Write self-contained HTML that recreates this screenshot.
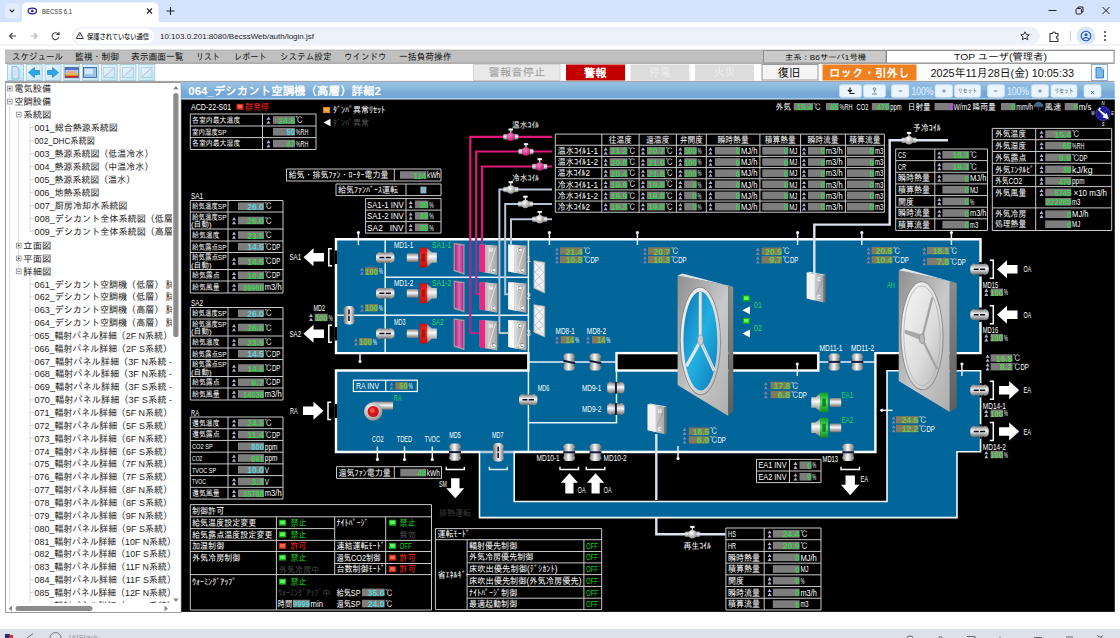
<!DOCTYPE html>
<html lang="ja"><head><meta charset="utf-8"><title>BECSS 6.1</title>
<style>

*{box-sizing:border-box;margin:0;padding:0}
html,body{width:1120px;height:638px;overflow:hidden;background:#fff}
body{font-family:"Liberation Sans","IPAGothic","Noto Sans CJK JP",sans-serif;font-size:9px;color:#000}
#root{position:relative;width:1120px;height:638px;overflow:hidden;background:#fff}
svg{position:absolute;display:block;font-family:"Liberation Sans","IPAGothic",sans-serif}
text{white-space:pre}

</style></head><body>
<div id="root">
<svg style="left:0;top:0" width="1120" height="100" viewBox="0 0 1120 100">
<defs><linearGradient id="tg" x1="0" y1="0" x2="0" y2="1"><stop offset="0" stop-color="#9bbfe6"/><stop offset=".35" stop-color="#86b9dd"/><stop offset=".58" stop-color="#79a8d7"/><stop offset="1" stop-color="#6fa8d8"/></linearGradient><linearGradient id="ib" x1="0" y1="0" x2="1" y2="1"><stop offset="0" stop-color="#ecf9fe"/><stop offset="1" stop-color="#bfe4f5"/></linearGradient></defs>
<rect x="0" y="0" width="1120" height="22.500" fill="#d3e3fd"/>
<rect x="5" y="3.500" width="14.500" height="15" rx="4" fill="#e3ecfb"/>
<path d="M18.500 22.500a3.500 3.500 0 0 0 3.500-3.500v-11.500a5 5 0 0 1 5-5h126.500a5 5 0 0 1 5 5v11.500a3.500 3.500 0 0 0 3.500 3.500z" fill="#fff"/>
<path d="M9.700 9.700l2.300 2.300l2.300-2.300" fill="none" stroke="#222" stroke-width="1.200"/>
<ellipse cx="32.300" cy="11" rx="4.200" ry="2.800" fill="none" stroke="#2b1f8f" stroke-width="1.300"/><circle cx="32.300" cy="11" r="1.300" fill="#2b1f8f"/>
<text x="42" y="13.88" font-size="8" fill="#333" textLength="30" lengthAdjust="spacingAndGlyphs" font-family="Liberation Sans,Noto Sans CJK JP,sans-serif">BECSS 6.1</text>
<path d="M147 8.500l5 5m0-5l-5 5" stroke="#222" stroke-width="1.100"/>
<path d="M170.500 7v8m-4-4h8" stroke="#222" stroke-width="1.100"/>
<path d="M1048.500 10.500h8" stroke="#222" stroke-width="1"/>
<rect x="1076" y="8.500" width="5.500" height="5.500" rx="1.200" fill="none" stroke="#222" stroke-width="1"/><path d="M1078 8.500v-1.500h5v5h-1.500" fill="none" stroke="#222" stroke-width="1"/>
<path d="M1102.500 7l7 7m0-7l-7 7" stroke="#222" stroke-width="1"/>
<rect x="0" y="22.500" width="1120" height="27" fill="#fff"/>
<rect x="72" y="27" width="968" height="18" rx="9" fill="#edf1f9"/>
<rect x="74" y="28.500" width="80" height="15" rx="7.500" fill="#fff"/>
<path d="M16 36h-6.500m3-3l-3 3l3 3" fill="none" stroke="#444" stroke-width="1.100"/>
<path d="M30.500 36h6.500m-3-3l3 3l-3 3" fill="none" stroke="#b8b8b8" stroke-width="1.100"/>
<path d="M58.300 34.200a3.400 3.400 0 1 0 .5 3" fill="none" stroke="#444" stroke-width="1.100"/><path d="M59.500 31.500v3.500h-3.500z" fill="#444"/>
<path d="M79.800 32.300l3.600 6.200h-7.200z" fill="none" stroke="#333" stroke-width="1"/><path d="M79.800 34.500v2" stroke="#333" stroke-width=".8"/>
<text x="87" y="38.59" font-size="7.2" fill="#222" textLength="62" lengthAdjust="spacingAndGlyphs" font-family="Liberation Sans,Noto Sans CJK JP,sans-serif" font-weight="500">保護されていない通信</text>
<text x="160" y="38.88" font-size="8" fill="#222" textLength="154" lengthAdjust="spacingAndGlyphs" font-family="Liberation Sans,Noto Sans CJK JP,sans-serif">10.103.0.201:8080/BecssWeb/auth/login.jsf</text>
<path d="M1025 31.800l1.300 2.700l3 .3l-2.300 2l.7 3l-2.700-1.600l-2.700 1.600l.7-3l-2.300-2l3-.3z" fill="none" stroke="#333" stroke-width="1"/>
<path d="M1050 33.500h2.500a1.500 1.500 0 1 1 3 0h2.500v2.500a1.500 1.500 0 1 0 0 3v2.500h-8z" fill="none" stroke="#333" stroke-width="1.100"/>
<path d="M1070.500 31v10" stroke="#c5cbd8" stroke-width="1"/>
<circle cx="1086" cy="36" r="9.500" fill="#dbe6f8"/><circle cx="1086" cy="36" r="4.800" fill="none" stroke="#1a56c4" stroke-width="1.100"/><circle cx="1086" cy="34.700" r="1.500" fill="#1a56c4"/><path d="M1083 39.300a3.500 3.500 0 0 1 6 0" fill="none" stroke="#1a56c4" stroke-width="1.100"/>
<circle cx="1105" cy="32" r="1" fill="#333"/><circle cx="1105" cy="36" r="1" fill="#333"/><circle cx="1105" cy="40" r="1" fill="#333"/>
<rect x="0" y="44" width="1120" height="2" fill="#f1f4f9"/><rect x="5" y="49.800" width="1109.500" height="13.800" fill="#c0c0c0"/><path d="M5 50.200h1109.500" stroke="#acacac" stroke-width=".8"/><path d="M5 63.200h1109.500" stroke="#8c8c8c" stroke-width=".8"/>
<text x="12" y="60.15" font-size="9.3" fill="#111" textLength="51" lengthAdjust="spacingAndGlyphs">スケジュール</text>
<text x="75" y="60.15" font-size="9.3" fill="#111" textLength="44" lengthAdjust="spacingAndGlyphs">監視・制御</text>
<text x="131" y="60.15" font-size="9.3" fill="#111" textLength="52.5" lengthAdjust="spacingAndGlyphs">表示画面一覧</text>
<text x="196" y="60.15" font-size="9.3" fill="#111" textLength="24" lengthAdjust="spacingAndGlyphs">リスト</text>
<text x="234" y="60.15" font-size="9.3" fill="#111" textLength="32.5" lengthAdjust="spacingAndGlyphs">レポート</text>
<text x="280" y="60.15" font-size="9.3" fill="#111" textLength="51.5" lengthAdjust="spacingAndGlyphs">システム設定</text>
<text x="344" y="60.15" font-size="9.3" fill="#111" textLength="42.5" lengthAdjust="spacingAndGlyphs">ウインドウ</text>
<text x="399" y="60.15" font-size="9.3" fill="#111" textLength="52.5" lengthAdjust="spacingAndGlyphs">一括負荷操作</text>
<rect x="763.500" y="50.500" width="122.500" height="12.500" fill="#cacaca" stroke="#8f8f8f" stroke-width="1"/>
<text x="785" y="59.68" font-size="8" fill="#111" textLength="81" lengthAdjust="spacingAndGlyphs">主系：B6サーバ1号機</text>
<rect x="886.500" y="50.500" width="227.500" height="12.500" fill="#fff" stroke="#8f8f8f" stroke-width="1"/>
<text x="954" y="60.26" font-size="9.6" fill="#111" textLength="93" lengthAdjust="spacingAndGlyphs">TOP ユーザ(管理者)</text>
<rect x="7.5" y="64.500" width="16" height="16" fill="url(#ib)" stroke="#a9cde2" stroke-width="1"/>
<rect x="26.25" y="64.500" width="16" height="16" fill="url(#ib)" stroke="#a9cde2" stroke-width="1"/>
<rect x="45" y="64.500" width="16" height="16" fill="url(#ib)" stroke="#a9cde2" stroke-width="1"/>
<rect x="63.75" y="64.500" width="16" height="16" fill="url(#ib)" stroke="#a9cde2" stroke-width="1"/>
<rect x="82.5" y="64.500" width="16" height="16" fill="url(#ib)" stroke="#a9cde2" stroke-width="1"/>
<rect x="101.25" y="64.500" width="16" height="16" fill="url(#ib)" stroke="#a9cde2" stroke-width="1"/>
<rect x="120" y="64.500" width="16" height="16" fill="url(#ib)" stroke="#a9cde2" stroke-width="1"/>
<rect x="138.75" y="64.500" width="16" height="16" fill="url(#ib)" stroke="#a9cde2" stroke-width="1"/>
<path d="M12 66.500h5l2 2.500v10h-7z" fill="#cfe4f6" stroke="#7fb1dc" stroke-width=".8"/><path d="M28.500 72.500l6-5v3h5v4h-5v3z" fill="#2aa6ec" stroke="#1878c0" stroke-width=".6"/><path d="M58.500 72.500l-6-5v3h-5v4h5v3z" fill="#2aa6ec" stroke="#1878c0" stroke-width=".6"/><rect x="65" y="67.300" width="13.500" height="10.500" fill="#4a78d0" stroke="#4a5a78" stroke-width=".7"/><rect x="65.400" y="70" width="12.700" height="3.500" fill="#b8c8e8"/><path d="M67 73l1.500-3l1.500 2l1.500-3l1.500 3l1.500-2l1.500 3z" fill="#e8a0a0"/><rect x="65.400" y="73.200" width="12.700" height="1.600" fill="#f6d040"/><rect x="65.400" y="74.800" width="12.700" height="1.300" fill="#f08a20"/><rect x="65.400" y="76.100" width="12.700" height="1.400" fill="#c8201c"/><rect x="83.500" y="67.500" width="13" height="10" fill="#9cc4ec" stroke="#2d5f9c" stroke-width=".8"/><rect x="85" y="69" width="8" height="5" fill="#d6e8f8"/><path d="M104 77l10-9M123 77l10-9M141.500 77l10-9" stroke="#c9b4d8" stroke-width="1"/><rect x="103.500" y="67.500" width="11" height="10" fill="none" stroke="#a9c7e0" stroke-width=".7"/><rect x="122.300" y="67.500" width="11" height="10" fill="none" stroke="#a9c7e0" stroke-width=".7"/><rect x="141" y="67.500" width="11" height="10" fill="none" stroke="#a9c7e0" stroke-width=".7"/>
<rect x="473.500" y="64.500" width="86.500" height="16" fill="#e9e9e9" stroke="#d2d2d2" stroke-width="1"/>
<text x="488.5" y="76.46" font-size="11" fill="#9a9a9a" textLength="57" lengthAdjust="spacingAndGlyphs">警報音停止</text>
<rect x="566" y="64.500" width="59" height="16" fill="#c20000"/>
<text x="584" y="76.64" font-size="11.5" fill="#fff" textLength="22.7" lengthAdjust="spacingAndGlyphs" font-weight="bold">警報</text>
<rect x="630.500" y="64.500" width="59" height="16" fill="#dcdcdc"/>
<text x="649" y="76.46" font-size="11" fill="#efefef" textLength="22" lengthAdjust="spacingAndGlyphs">停電</text>
<rect x="695" y="64.500" width="59" height="16" fill="#dcdcdc"/>
<text x="713.5" y="76.46" font-size="11" fill="#efefef" textLength="22" lengthAdjust="spacingAndGlyphs">火災</text>
<rect x="762" y="64.500" width="56" height="15.500" fill="#f4f4f4" stroke="#9a9a9a" stroke-width="1"/>
<text x="777.7" y="76.62" font-size="12" fill="#000" textLength="22.5" lengthAdjust="spacingAndGlyphs">復旧</text>
<rect x="822.500" y="64.500" width="94" height="16" fill="#f08020"/>
<text x="829" y="76.64" font-size="11.5" fill="#fff" textLength="80.5" lengthAdjust="spacingAndGlyphs" font-weight="bold">ロック・引外し</text>
<text x="930.5" y="76.64" font-size="11.5" fill="#111" textLength="143.5" lengthAdjust="spacingAndGlyphs">2025年11月28日(金) 10:05:33</text>
<rect x="1091.500" y="64.500" width="16" height="16" fill="#f4f9fd" stroke="#8fb0d0" stroke-width="1"/>
<path d="M1096 67.500h5l2.500 2.500v8h-7.500z" fill="#7db9ee" stroke="#2a6fb5" stroke-width=".8"/><path d="M1101 67.500v2.500h2.500" fill="#d8ecfb" stroke="#2a6fb5" stroke-width=".6"/>
<path d="M5 81.400H1114.800" stroke="#8e8e8e" stroke-width=".9"/><path d="M181 99.600V84a2 2 0 0 1 2-2H1112.800a2 2 0 0 1 2 2V99.600Z" fill="url(#tg)"/><rect x="181" y="98.200" width="933.800" height="1.400" fill="#b6d6f2"/>
<text x="188.3" y="94.88" font-size="11.6" fill="#fff" textLength="192.5" lengthAdjust="spacingAndGlyphs" font-weight="bold">064_デシカント空調機（高層）詳細2</text>
<rect x="839.5" y="84.700" width="22" height="12.600" rx="2" fill="#eaf5fd" stroke="#cfe3f5" stroke-width=".7"/>
<rect x="863.5" y="84.700" width="22" height="12.600" rx="2" fill="#eaf5fd" stroke="#cfe3f5" stroke-width=".7"/>
<rect x="891.5" y="84.700" width="17.5" height="12.600" rx="2" fill="#eaf5fd" stroke="#cfe3f5" stroke-width=".7"/>
<rect x="935" y="84.700" width="17.5" height="12.600" rx="2" fill="#eaf5fd" stroke="#cfe3f5" stroke-width=".7"/>
<rect x="954.5" y="84.700" width="26" height="12.600" rx="2" fill="#eaf5fd" stroke="#cfe3f5" stroke-width=".7"/>
<rect x="987.5" y="84.700" width="17" height="12.600" rx="2" fill="#eaf5fd" stroke="#cfe3f5" stroke-width=".7"/>
<rect x="1031.5" y="84.700" width="17" height="12.600" rx="2" fill="#eaf5fd" stroke="#cfe3f5" stroke-width=".7"/>
<rect x="1051" y="84.700" width="26" height="12.600" rx="2" fill="#eaf5fd" stroke="#cfe3f5" stroke-width=".7"/>
<rect x="1084" y="84.700" width="17" height="12.600" rx="2" fill="#eaf5fd" stroke="#cfe3f5" stroke-width=".7"/>
<rect x="909.500" y="84.500" width="25" height="13" fill="#8ab9e4"/><rect x="1005" y="84.500" width="26" height="13" fill="#8ab9e4"/>
<text x="911.5" y="94.6" font-size="10" fill="#e6f1fb" textLength="22" lengthAdjust="spacingAndGlyphs">100%</text>
<text x="1007" y="94.6" font-size="10" fill="#e6f1fb" textLength="22" lengthAdjust="spacingAndGlyphs">100%</text>
<path d="M850.500 87.500v4.500m-2-2l2 2l2-2m-2.500 3.500h5" fill="none" stroke="#111" stroke-width="1.100" transform="translate(-.5 0)"/>
<path d="M874.500 90.200v2.300m-2.500 1.500h5" fill="none" stroke="#667" stroke-width=".8"/><circle cx="874.500" cy="89" r="1.300" fill="none" stroke="#667" stroke-width=".8"/>
<path d="M898.500 91h3.500M994 91h3.500" stroke="#70849a" stroke-width="1"/>
<path d="M942 91h4m-2-2v4M1038 91h4m-2-2v4" stroke="#70849a" stroke-width=".9"/>
<text x="958" y="93.23" font-size="6.2" fill="#2a3f5a" textLength="19" lengthAdjust="spacingAndGlyphs">リセット</text>
<text x="1054.5" y="93.23" font-size="6.2" fill="#2a3f5a" textLength="19" lengthAdjust="spacingAndGlyphs">リセット</text>
<path d="M1091 91l3 3m0-3l-3 3" stroke="#3a6a9a" stroke-width="1"/>
</svg>
<svg style="left:0;top:629px" width="1120" height="9" viewBox="0 629 1120 9"><rect x="0" y="629" width="1120" height="9" fill="#dde1ea"/><rect x="5" y="634" width="5" height="4" fill="#1d2f7a"/><rect x="9" y="635" width="4" height="3" fill="#d03030"/><path d="M27 638l6-4.500" stroke="#666" stroke-width="1"/><path d="M50 638a5.500 5.500 0 0 1 11 0" fill="none" stroke="#777" stroke-width="1"/><path d="M907 638a3 2 0 0 1 6 0M939 638a1.500 1.500 0 0 1 3 0M967 636.500h8v1.500M1000 636.500v1M1034 637.500h8M1066 637h7M1097 635.500l5 2.500m1-2.500l-3 2.500" fill="none" stroke="#666" stroke-width="1"/><text x="69" y="640.38" font-size="8" fill="#9a9a9a" textLength="29" lengthAdjust="spacingAndGlyphs" font-family="Liberation Sans,Noto Sans CJK JP,sans-serif">[A]Stack</text></svg>
<svg style="left:5px;top:82px" width="177" height="531" viewBox="5 82 177 531">
<rect x="5.500" y="82.500" width="175.500" height="530" fill="#fff" stroke="#9a9a9a" stroke-width="1"/>
<path d="M9.700 93v5M9.700 105.500v500M18.700 119v150M30 121v110.500M30 275.500v329" stroke="#d4d4d4" stroke-width=".8"/>
<text x="14.3" y="91.98" font-size="9.4" fill="#1c1c1c" textLength="37.1" lengthAdjust="spacingAndGlyphs">電気設備</text>
<rect x="7.3" y="86.2" width="4.800" height="4.800" fill="#fff" stroke="#8a8a8a" stroke-width=".8"/>
<path d="M8.4 88.6h2.600" stroke="#333" stroke-width=".7"/>
<path d="M9.7 87.3v2.600" stroke="#333" stroke-width=".7"/>
<text x="14.3" y="104.98" font-size="9.4" fill="#1c1c1c" textLength="37.1" lengthAdjust="spacingAndGlyphs">空調設備</text>
<rect x="7.3" y="99.2" width="4.800" height="4.800" fill="#fff" stroke="#8a8a8a" stroke-width=".8"/>
<path d="M8.4 101.6h2.600" stroke="#333" stroke-width=".7"/>
<text x="23.3" y="117.98" font-size="9.4" fill="#1c1c1c" textLength="28" lengthAdjust="spacingAndGlyphs">系統図</text>
<rect x="16.3" y="112.2" width="4.800" height="4.800" fill="#fff" stroke="#8a8a8a" stroke-width=".8"/>
<path d="M17.4 114.6h2.600" stroke="#333" stroke-width=".7"/>
<text x="34.6" y="130.98" font-size="9.4" fill="#1c1c1c" textLength="83.3" lengthAdjust="spacingAndGlyphs">001_総合熱源系統図</text>
<path d="M30 127.6h3.500" stroke="#c4c4c4" stroke-width=".8"/>
<text x="34.6" y="143.98" font-size="9.4" fill="#1c1c1c" textLength="60.2" lengthAdjust="spacingAndGlyphs">002_DHC系統図</text>
<path d="M30 140.6h3.500" stroke="#c4c4c4" stroke-width=".8"/>
<text x="34.6" y="156.98" font-size="9.4" fill="#1c1c1c" textLength="118.6" lengthAdjust="spacingAndGlyphs">003_熱源系統図（低温冷水）</text>
<path d="M30 153.6h3.500" stroke="#c4c4c4" stroke-width=".8"/>
<text x="34.6" y="169.98" font-size="9.4" fill="#1c1c1c" textLength="118.6" lengthAdjust="spacingAndGlyphs">004_熱源系統図（中温冷水）</text>
<path d="M30 166.6h3.500" stroke="#c4c4c4" stroke-width=".8"/>
<text x="34.6" y="182.98" font-size="9.4" fill="#1c1c1c" textLength="100.3" lengthAdjust="spacingAndGlyphs">005_熱源系統図（温水）</text>
<path d="M30 179.6h3.500" stroke="#c4c4c4" stroke-width=".8"/>
<text x="34.6" y="195.98" font-size="9.4" fill="#1c1c1c" textLength="65" lengthAdjust="spacingAndGlyphs">006_地熱系統図</text>
<path d="M30 192.6h3.500" stroke="#c4c4c4" stroke-width=".8"/>
<text x="34.6" y="208.98" font-size="9.4" fill="#1c1c1c" textLength="92.8" lengthAdjust="spacingAndGlyphs">007_厨房冷却水系統図</text>
<path d="M30 205.6h3.500" stroke="#c4c4c4" stroke-width=".8"/>
<text x="34.6" y="221.98" font-size="9.4" fill="#1c1c1c" textLength="138.4" lengthAdjust="spacingAndGlyphs">008_デシカント全体系統図（低層</text>
<path d="M30 218.6h3.500" stroke="#c4c4c4" stroke-width=".8"/>
<text x="34.6" y="234.98" font-size="9.4" fill="#1c1c1c" textLength="138.4" lengthAdjust="spacingAndGlyphs">009_デシカント全体系統図（高層</text>
<path d="M30 231.6h3.500" stroke="#c4c4c4" stroke-width=".8"/>
<text x="23.3" y="248.98" font-size="9.4" fill="#1c1c1c" textLength="28" lengthAdjust="spacingAndGlyphs">立面図</text>
<rect x="16.3" y="243.2" width="4.800" height="4.800" fill="#fff" stroke="#8a8a8a" stroke-width=".8"/>
<path d="M17.4 245.6h2.600" stroke="#333" stroke-width=".7"/>
<path d="M18.7 244.3v2.600" stroke="#333" stroke-width=".7"/>
<text x="23.3" y="261.83" font-size="9.4" fill="#1c1c1c" textLength="28" lengthAdjust="spacingAndGlyphs">平面図</text>
<rect x="16.3" y="256.05" width="4.800" height="4.800" fill="#fff" stroke="#8a8a8a" stroke-width=".8"/>
<path d="M17.4 258.45h2.600" stroke="#333" stroke-width=".7"/>
<path d="M18.7 257.15v2.600" stroke="#333" stroke-width=".7"/>
<text x="23.3" y="274.68" font-size="9.4" fill="#1c1c1c" textLength="28" lengthAdjust="spacingAndGlyphs">詳細図</text>
<rect x="16.3" y="268.9" width="4.800" height="4.800" fill="#fff" stroke="#8a8a8a" stroke-width=".8"/>
<path d="M17.4 271.3h2.600" stroke="#333" stroke-width=".7"/>
<text x="34.6" y="287.53" font-size="9.4" fill="#1c1c1c" textLength="140.3" lengthAdjust="spacingAndGlyphs">061_デシカント空調機（低層） 詳</text>
<path d="M30 284.15h3.500" stroke="#c4c4c4" stroke-width=".8"/>
<text x="34.6" y="300.38" font-size="9.4" fill="#1c1c1c" textLength="140.3" lengthAdjust="spacingAndGlyphs">062_デシカント空調機（低層） 詳</text>
<path d="M30 297h3.500" stroke="#c4c4c4" stroke-width=".8"/>
<text x="34.6" y="313.23" font-size="9.4" fill="#1c1c1c" textLength="140.3" lengthAdjust="spacingAndGlyphs">063_デシカント空調機（高層） 詳</text>
<path d="M30 309.85h3.500" stroke="#c4c4c4" stroke-width=".8"/>
<text x="34.6" y="326.08" font-size="9.4" fill="#1c1c1c" textLength="140.3" lengthAdjust="spacingAndGlyphs">064_デシカント空調機（高層） 詳</text>
<path d="M30 322.7h3.500" stroke="#c4c4c4" stroke-width=".8"/>
<text x="34.6" y="338.93" font-size="9.4" fill="#1c1c1c" textLength="137.2" lengthAdjust="spacingAndGlyphs">065_輻射パネル詳細（2F N系統）</text>
<path d="M30 335.55h3.500" stroke="#c4c4c4" stroke-width=".8"/>
<text x="34.6" y="351.78" font-size="9.4" fill="#1c1c1c" textLength="137.2" lengthAdjust="spacingAndGlyphs">066_輻射パネル詳細（2F S系統）</text>
<path d="M30 348.4h3.500" stroke="#c4c4c4" stroke-width=".8"/>
<text x="34.6" y="364.63" font-size="9.4" fill="#1c1c1c" textLength="137.4" lengthAdjust="spacingAndGlyphs">067_輻射パネル詳細（3F N系統 -</text>
<path d="M30 361.25h3.500" stroke="#c4c4c4" stroke-width=".8"/>
<text x="34.6" y="377.48" font-size="9.4" fill="#1c1c1c" textLength="137.4" lengthAdjust="spacingAndGlyphs">068_輻射パネル詳細（3F N系統 -</text>
<path d="M30 374.1h3.500" stroke="#c4c4c4" stroke-width=".8"/>
<text x="34.6" y="390.33" font-size="9.4" fill="#1c1c1c" textLength="137.4" lengthAdjust="spacingAndGlyphs">069_輻射パネル詳細（3F S系統 -</text>
<path d="M30 386.95h3.500" stroke="#c4c4c4" stroke-width=".8"/>
<text x="34.6" y="403.18" font-size="9.4" fill="#1c1c1c" textLength="137.4" lengthAdjust="spacingAndGlyphs">070_輻射パネル詳細（3F S系統 -</text>
<path d="M30 399.8h3.500" stroke="#c4c4c4" stroke-width=".8"/>
<text x="34.6" y="416.03" font-size="9.4" fill="#1c1c1c" textLength="137.2" lengthAdjust="spacingAndGlyphs">071_輻射パネル詳細（5F N系統）</text>
<path d="M30 412.65h3.500" stroke="#c4c4c4" stroke-width=".8"/>
<text x="34.6" y="428.88" font-size="9.4" fill="#1c1c1c" textLength="137.2" lengthAdjust="spacingAndGlyphs">072_輻射パネル詳細（5F S系統）</text>
<path d="M30 425.5h3.500" stroke="#c4c4c4" stroke-width=".8"/>
<text x="34.6" y="441.73" font-size="9.4" fill="#1c1c1c" textLength="137.2" lengthAdjust="spacingAndGlyphs">073_輻射パネル詳細（6F N系統）</text>
<path d="M30 438.35h3.500" stroke="#c4c4c4" stroke-width=".8"/>
<text x="34.6" y="454.58" font-size="9.4" fill="#1c1c1c" textLength="137.2" lengthAdjust="spacingAndGlyphs">074_輻射パネル詳細（6F S系統）</text>
<path d="M30 451.2h3.500" stroke="#c4c4c4" stroke-width=".8"/>
<text x="34.6" y="467.43" font-size="9.4" fill="#1c1c1c" textLength="137.2" lengthAdjust="spacingAndGlyphs">075_輻射パネル詳細（7F N系統）</text>
<path d="M30 464.05h3.500" stroke="#c4c4c4" stroke-width=".8"/>
<text x="34.6" y="480.28" font-size="9.4" fill="#1c1c1c" textLength="137.2" lengthAdjust="spacingAndGlyphs">076_輻射パネル詳細（7F S系統）</text>
<path d="M30 476.9h3.500" stroke="#c4c4c4" stroke-width=".8"/>
<text x="34.6" y="493.13" font-size="9.4" fill="#1c1c1c" textLength="137.2" lengthAdjust="spacingAndGlyphs">077_輻射パネル詳細（8F N系統）</text>
<path d="M30 489.75h3.500" stroke="#c4c4c4" stroke-width=".8"/>
<text x="34.6" y="505.98" font-size="9.4" fill="#1c1c1c" textLength="137.2" lengthAdjust="spacingAndGlyphs">078_輻射パネル詳細（8F S系統）</text>
<path d="M30 502.6h3.500" stroke="#c4c4c4" stroke-width=".8"/>
<text x="34.6" y="518.83" font-size="9.4" fill="#1c1c1c" textLength="137.2" lengthAdjust="spacingAndGlyphs">079_輻射パネル詳細（9F N系統）</text>
<path d="M30 515.45h3.500" stroke="#c4c4c4" stroke-width=".8"/>
<text x="34.6" y="531.68" font-size="9.4" fill="#1c1c1c" textLength="137.2" lengthAdjust="spacingAndGlyphs">080_輻射パネル詳細（9F S系統）</text>
<path d="M30 528.3h3.500" stroke="#c4c4c4" stroke-width=".8"/>
<text x="34.6" y="544.53" font-size="9.4" fill="#1c1c1c" textLength="141" lengthAdjust="spacingAndGlyphs">081_輻射パネル詳細（10F N系統）</text>
<path d="M30 541.15h3.500" stroke="#c4c4c4" stroke-width=".8"/>
<text x="34.6" y="557.38" font-size="9.4" fill="#1c1c1c" textLength="141" lengthAdjust="spacingAndGlyphs">082_輻射パネル詳細（10F S系統）</text>
<path d="M30 554h3.500" stroke="#c4c4c4" stroke-width=".8"/>
<text x="34.6" y="570.23" font-size="9.4" fill="#1c1c1c" textLength="141" lengthAdjust="spacingAndGlyphs">083_輻射パネル詳細（11F N系統）</text>
<path d="M30 566.85h3.500" stroke="#c4c4c4" stroke-width=".8"/>
<text x="34.6" y="583.08" font-size="9.4" fill="#1c1c1c" textLength="141" lengthAdjust="spacingAndGlyphs">084_輻射パネル詳細（11F S系統）</text>
<path d="M30 579.7h3.500" stroke="#c4c4c4" stroke-width=".8"/>
<text x="34.6" y="595.93" font-size="9.4" fill="#1c1c1c" textLength="141" lengthAdjust="spacingAndGlyphs">085_輻射パネル詳細（12F N系統）</text>
<path d="M30 592.55h3.500" stroke="#c4c4c4" stroke-width=".8"/>
<text x="34.6" y="608.78" font-size="9.4" fill="#1c1c1c" textLength="141" lengthAdjust="spacingAndGlyphs">086_輻射パネル詳細（12F N系統）</text>
<path d="M30 605.4h3.500" stroke="#c4c4c4" stroke-width=".8"/>
<rect x="171.800" y="83" width="8.700" height="521" fill="#fff"/>
<rect x="173.300" y="93" width="5.200" height="244" rx="2.600" fill="#8c8c8c"/>
<path d="M173 89.500l2.900-3.500l2.900 3.500z" fill="#8c8c8c"/><path d="M173 598.500l2.900 3.500l2.900-3.500z" fill="#8c8c8c"/>
<rect x="6" y="603" width="174.500" height="9" fill="#fff"/>
<rect x="15.500" y="606" width="77" height="5" rx="2.500" fill="#8c8c8c"/>
<path d="M12 605.500l-3.500 3l3.500 3z" fill="#8c8c8c"/><path d="M164.500 605.500l3.500 3l-3.500 3z" fill="#8c8c8c"/>
</svg>
<svg style="left:181px;top:99px" width="934" height="514" viewBox="181 99 934 514">
<rect x="181.300" y="99.600" width="933.500" height="512.300" fill="#000"/>
<defs>
<linearGradient id="sv" x1="0" y1="0" x2="0" y2="1"><stop offset="0" stop-color="#7e7e7e"/><stop offset=".45" stop-color="#fafafa"/><stop offset="1" stop-color="#6e6e6e"/></linearGradient>
<linearGradient id="sh" x1="0" y1="0" x2="1" y2="0"><stop offset="0" stop-color="#7e7e7e"/><stop offset=".45" stop-color="#fafafa"/><stop offset="1" stop-color="#6e6e6e"/></linearGradient>
<linearGradient id="slab" x1="0" y1="0" x2="1" y2="0"><stop offset="0" stop-color="#a2a2a2"/><stop offset=".5" stop-color="#cdcdcd"/><stop offset="1" stop-color="#a4a4a4"/></linearGradient><linearGradient id="slabR" x1="0" y1="0" x2="1" y2="1"><stop offset="0" stop-color="#8f8f8f"/><stop offset=".55" stop-color="#c9c9c9"/><stop offset="1" stop-color="#aeaeae"/></linearGradient>
<linearGradient id="slabside" x1="0" y1="0" x2="0" y2="1"><stop offset="0" stop-color="#8c8c8c"/><stop offset="1" stop-color="#5e5e5e"/></linearGradient>
<linearGradient id="whl" x1="0" y1="0" x2="1" y2="1"><stop offset="0" stop-color="#0c74b2"/><stop offset=".5" stop-color="#22b0e2"/><stop offset="1" stop-color="#0c7ab8"/></linearGradient>
<linearGradient id="whw" x1="0" y1="0" x2="1" y2="1"><stop offset="0" stop-color="#f6f6f6"/><stop offset=".6" stop-color="#dcdcdc"/><stop offset="1" stop-color="#b8b8b8"/></linearGradient>
<linearGradient id="pk" x1="0" y1="0" x2="1" y2="0"><stop offset="0" stop-color="#a8207c"/><stop offset=".5" stop-color="#e660b4"/><stop offset="1" stop-color="#b02888"/></linearGradient>
<linearGradient id="rd" x1="0" y1="0" x2="0" y2="1"><stop offset="0" stop-color="#d01010"/><stop offset=".45" stop-color="#ff2a1a"/><stop offset="1" stop-color="#c00c0c"/></linearGradient>
<linearGradient id="gn" x1="0" y1="0" x2="0" y2="1"><stop offset="0" stop-color="#129a26"/><stop offset=".45" stop-color="#4ae65c"/><stop offset="1" stop-color="#0e8a20"/></linearGradient>
<radialGradient id="ball" cx=".4" cy=".35" r=".7"><stop offset="0" stop-color="#ff80c8"/><stop offset="1" stop-color="#c0106a"/></radialGradient>
<radialGradient id="ballw" cx=".4" cy=".35" r=".7"><stop offset="0" stop-color="#ffffff"/><stop offset="1" stop-color="#8e8e8e"/></radialGradient>
</defs>
<path d="M479.5 452L479.5 517.6L957 517.6L957 451.8L980.6 451.8L980.6 370.8L887 370.8L887 501.5L514.2 501.5L514.2 452Z" fill="#006599" stroke="#f2faff" stroke-width="1.600" stroke-linejoin="miter"/>
<path d="M336 239.3L980.5 239.3L980.5 353.1L875.4 353.1L875.4 452L336 452L336 370.5L528.4 370.5L528.4 353.1L336 353.1Z" fill="#006599" stroke="#fff" stroke-width="2.400" stroke-linejoin="miter"/>
<rect x="480.300" y="450.700" width="33.100" height="2.600" fill="#006599"/>
<rect x="616.500" y="353.100" width="201.800" height="17.400" fill="#000" stroke="#fff" stroke-width="2.400"/>
<path d="M385.200 239.300V353.100M385.200 277.200H528.400M336 315.300H528.400M528.400 239.300V452M528.400 362H616.500M616.500 370.500V422.800H528.400M818.300 362H875.400M479.500 452H514.200" fill="none" stroke="#e4f4ff" stroke-width="1.500"/>
<path d="M552 136.800H470.300V239M552 151.500H476.200V239M552 166.500H482V239" fill="none" stroke="#e0187c" stroke-width="2.200"/>
<path d="M470.300 239V333H479.500M476.200 239V294.200H479.500M482 239V244.500" fill="none" stroke="#b0268c" stroke-width="2.200"/>
<path d="M552 189.500H499.400V333H508M552 204H505.200V294.200H508M552 219.200H511V244.500" fill="none" stroke="#b9c3d6" stroke-width="2"/>
<rect x="503.3" y="134" width="15" height="5.600" rx="1.200" fill="url(#sv)"/>
<circle cx="510.8" cy="136.8" r="4.200" fill="url(#ball)"/>
<path d="M510.8 132.8v-3" stroke="#ddd" stroke-width="1.200"/><rect x="508.6" y="128.5" width="4.400" height="2" fill="#fff"/>
<rect x="518.5" y="148.7" width="15" height="5.600" rx="1.200" fill="url(#sv)"/>
<circle cx="526" cy="151.5" r="4.200" fill="url(#ball)"/>
<path d="M526 147.5v-3" stroke="#ddd" stroke-width="1.200"/><rect x="523.8" y="143.2" width="4.400" height="2" fill="#fff"/>
<rect x="532.2" y="163.7" width="15" height="5.600" rx="1.200" fill="url(#sv)"/>
<circle cx="539.7" cy="166.5" r="4.200" fill="url(#ball)"/>
<path d="M539.7 162.5v-3" stroke="#ddd" stroke-width="1.200"/><rect x="537.5" y="158.2" width="4.400" height="2" fill="#fff"/>
<rect x="503.3" y="186.7" width="15" height="5.600" rx="1.200" fill="url(#sv)"/>
<circle cx="510.8" cy="189.5" r="4.200" fill="url(#ballw)"/>
<path d="M510.8 185.5v-3" stroke="#ddd" stroke-width="1.200"/><rect x="508.6" y="181.2" width="4.400" height="2" fill="#fff"/>
<rect x="517.9" y="201.2" width="15" height="5.600" rx="1.200" fill="url(#sv)"/>
<circle cx="525.4" cy="204" r="4.200" fill="url(#ballw)"/>
<path d="M525.4 200v-3" stroke="#ddd" stroke-width="1.200"/><rect x="523.2" y="195.7" width="4.400" height="2" fill="#fff"/>
<rect x="532.2" y="216.4" width="15" height="5.600" rx="1.200" fill="url(#sv)"/>
<circle cx="539.7" cy="219.2" r="4.200" fill="url(#ballw)"/>
<path d="M539.7 215.2v-3" stroke="#ddd" stroke-width="1.200"/><rect x="537.5" y="210.9" width="4.400" height="2" fill="#fff"/>
<text x="512" y="127.9" font-size="8.6" fill="#fff" textLength="26.95" lengthAdjust="spacingAndGlyphs">温水ｺｲﾙ</text>
<text x="512" y="180.8" font-size="8.6" fill="#fff" textLength="26.95" lengthAdjust="spacingAndGlyphs">冷水ｺｲﾙ</text>
<path d="M948 140.200H889.700V224.600H814.300V273" fill="none" stroke="#dbe3f0" stroke-width="2.400"/>
<rect x="901.5" y="137.4" width="15" height="5.600" rx="1.200" fill="url(#sv)"/>
<circle cx="909" cy="140.2" r="4.200" fill="url(#ballw)"/>
<path d="M909 136.2v-3" stroke="#ddd" stroke-width="1.200"/><rect x="906.8" y="131.9" width="4.400" height="2" fill="#fff"/>
<path d="M656.300 434V500M656.300 518V534.200H725.500" fill="none" stroke="#dbe3f0" stroke-width="2.400"/>
<rect x="684.9" y="531.4" width="15" height="5.600" rx="1.200" fill="url(#sv)"/>
<circle cx="692.4" cy="534.2" r="4.200" fill="url(#ballw)"/>
<path d="M692.4 530.2v-3" stroke="#ddd" stroke-width="1.200"/><rect x="690.2" y="525.9" width="4.400" height="2" fill="#fff"/>
<path d="M453.800 243L464.400 244.5V274.6L453.800 271.1Z" fill="#b9a9b4" stroke="#8d7f8a" stroke-width=".500"/>
<path d="M454.800 244.3L463.400 245.6V273L454.800 270Z" fill="url(#pk)"/>
<path d="M459.100 245V271.5" stroke="#9c8a98" stroke-width=".900"/>
<path d="M479.600 244.5L497.200 245.5V275L479.600 271.6Z" fill="url(#slab)"/>
<path d="M479.600 244.5L485.200 244.8V272.7L479.600 271.6Z" fill="#ee2482"/>
<path d="M485.200 244.8L487.400 244.9V273.1L485.200 272.7Z" fill="#c9b3bf"/>
<path d="M495.500 248L488.500 271" stroke="#e6e6e6" stroke-width=".900"/>
<path d="M497.200 245.5L498.300 246V274.3L497.200 275Z" fill="#6f6f6f"/>
<text x="489" y="252.39" font-size="5.8" fill="#fff" textLength="3.8" lengthAdjust="spacingAndGlyphs" font-weight="bold">H</text>
<circle cx="493.200" cy="270.2" r="2.300" fill="#fff"/>
<text x="491.8" y="271.96" font-size="4.6" fill="#666" textLength="2.8" lengthAdjust="spacingAndGlyphs" font-weight="bold">C</text>
<path d="M508.200 244.5L526 245.5V275L508.200 271.6Z" fill="url(#slab)"/>
<path d="M508.200 244.5L514.500 244.9V272.8L508.200 271.6Z" fill="#fafafa"/>
<path d="M514.500 244.9L516.500 245V273.2L514.500 272.8Z" fill="#dcdcdc"/>
<path d="M524.300 248L517.500 271" stroke="#e6e6e6" stroke-width=".900"/>
<path d="M526 245.5L527.100 246V274.3L526 275Z" fill="#6f6f6f"/>
<circle cx="519.300" cy="250.3" r="2.300" fill="#fff"/>
<text x="517.9" y="252.06" font-size="4.6" fill="#666" textLength="2.8" lengthAdjust="spacingAndGlyphs" font-weight="bold">C</text>
<circle cx="521.600" cy="270.2" r="2.300" fill="#fff"/>
<text x="520.2" y="271.96" font-size="4.6" fill="#666" textLength="2.8" lengthAdjust="spacingAndGlyphs" font-weight="bold">C</text>
<path d="M453.800 280.7L464.400 282.2V312.3L453.800 308.8Z" fill="#b9a9b4" stroke="#8d7f8a" stroke-width=".500"/>
<path d="M454.800 282L463.400 283.3V310.7L454.800 307.7Z" fill="url(#pk)"/>
<path d="M459.100 282.7V309.2" stroke="#9c8a98" stroke-width=".900"/>
<path d="M479.600 282.2L497.200 283.2V312.7L479.600 309.3Z" fill="url(#slab)"/>
<path d="M479.600 282.2L485.200 282.5V310.4L479.600 309.3Z" fill="#ee2482"/>
<path d="M485.200 282.5L487.400 282.6V310.8L485.200 310.4Z" fill="#c9b3bf"/>
<path d="M495.500 285.7L488.500 308.7" stroke="#e6e6e6" stroke-width=".900"/>
<path d="M497.200 283.2L498.300 283.7V312L497.200 312.7Z" fill="#6f6f6f"/>
<text x="489" y="290.09" font-size="5.8" fill="#fff" textLength="3.8" lengthAdjust="spacingAndGlyphs" font-weight="bold">H</text>
<circle cx="493.200" cy="307.9" r="2.300" fill="#fff"/>
<text x="491.8" y="309.66" font-size="4.6" fill="#666" textLength="2.8" lengthAdjust="spacingAndGlyphs" font-weight="bold">C</text>
<path d="M508.200 282.2L526 283.2V312.7L508.200 309.3Z" fill="url(#slab)"/>
<path d="M508.200 282.2L514.500 282.6V310.5L508.200 309.3Z" fill="#fafafa"/>
<path d="M514.500 282.6L516.500 282.7V310.9L514.500 310.5Z" fill="#dcdcdc"/>
<path d="M524.300 285.7L517.500 308.7" stroke="#e6e6e6" stroke-width=".900"/>
<path d="M526 283.2L527.100 283.7V312L526 312.7Z" fill="#6f6f6f"/>
<circle cx="519.300" cy="288" r="2.300" fill="#fff"/>
<text x="517.9" y="289.76" font-size="4.6" fill="#666" textLength="2.8" lengthAdjust="spacingAndGlyphs" font-weight="bold">C</text>
<circle cx="521.600" cy="307.9" r="2.300" fill="#fff"/>
<text x="520.2" y="309.66" font-size="4.6" fill="#666" textLength="2.8" lengthAdjust="spacingAndGlyphs" font-weight="bold">C</text>
<path d="M453.800 318.5L464.400 320V350.1L453.800 346.6Z" fill="#b9a9b4" stroke="#8d7f8a" stroke-width=".500"/>
<path d="M454.800 319.8L463.400 321.1V348.5L454.800 345.5Z" fill="url(#pk)"/>
<path d="M459.100 320.5V347" stroke="#9c8a98" stroke-width=".900"/>
<path d="M479.600 320L497.200 321V350.5L479.600 347.1Z" fill="url(#slab)"/>
<path d="M479.600 320L485.200 320.3V348.2L479.600 347.1Z" fill="#ee2482"/>
<path d="M485.200 320.3L487.400 320.4V348.6L485.200 348.2Z" fill="#c9b3bf"/>
<path d="M495.500 323.5L488.500 346.5" stroke="#e6e6e6" stroke-width=".900"/>
<path d="M497.200 321L498.300 321.5V349.8L497.200 350.5Z" fill="#6f6f6f"/>
<text x="489" y="327.89" font-size="5.8" fill="#fff" textLength="3.8" lengthAdjust="spacingAndGlyphs" font-weight="bold">H</text>
<circle cx="493.200" cy="345.7" r="2.300" fill="#fff"/>
<text x="491.8" y="347.46" font-size="4.6" fill="#666" textLength="2.8" lengthAdjust="spacingAndGlyphs" font-weight="bold">C</text>
<path d="M508.200 320L526 321V350.5L508.200 347.1Z" fill="url(#slab)"/>
<path d="M508.200 320L514.500 320.4V348.3L508.200 347.1Z" fill="#fafafa"/>
<path d="M514.500 320.4L516.500 320.5V348.7L514.500 348.3Z" fill="#dcdcdc"/>
<path d="M524.300 323.5L517.500 346.5" stroke="#e6e6e6" stroke-width=".900"/>
<path d="M526 321L527.100 321.5V349.8L526 350.5Z" fill="#6f6f6f"/>
<circle cx="519.300" cy="325.8" r="2.300" fill="#fff"/>
<text x="517.9" y="327.56" font-size="4.6" fill="#666" textLength="2.8" lengthAdjust="spacingAndGlyphs" font-weight="bold">C</text>
<circle cx="521.600" cy="345.7" r="2.300" fill="#fff"/>
<text x="520.2" y="347.46" font-size="4.6" fill="#666" textLength="2.8" lengthAdjust="spacingAndGlyphs" font-weight="bold">C</text>
<path d="M533.800 260.6L544.800 262.3V293.2L533.800 288.2Z" fill="#dedede" stroke="#9a9a9a" stroke-width=".700"/>
<path d="M535 262.5L543.600 263.8V291L535 287Z" fill="#f2f2f2"/>
<path d="M535 263L543.600 272.5L535 281L543.600 290.5M543.600 264L535 272L543.600 281.5L535 287" fill="none" stroke="#bdbdbd" stroke-width=".800"/>
<path d="M533.800 304.6L544.800 306.3V337.2L533.800 332.2Z" fill="#dedede" stroke="#9a9a9a" stroke-width=".700"/>
<path d="M535 306.5L543.600 307.8V335L535 331Z" fill="#f2f2f2"/>
<path d="M535 307L543.600 316.5L535 325L543.600 334.5M543.600 308L535 316L543.600 325.5L535 331" fill="none" stroke="#bdbdbd" stroke-width=".800"/>
<rect x="406.800" y="253.2" width="11.400" height="8.800" rx="1.200" fill="url(#sv)"/>
<path d="M426.500 247.8L432 252.4H436.800V262.8H432L426.500 267.4Z" fill="url(#sv)"/>
<rect x="419.800" y="247.6" width="7.400" height="20" rx="1.500" fill="url(#rd)"/>
<rect x="421.500" y="253.6" width="3.600" height="8" fill="#8c1414" opacity=".75"/>
<rect x="406.800" y="288.9" width="11.400" height="8.800" rx="1.200" fill="url(#sv)"/>
<path d="M426.500 283.5L432 288.1H436.800V298.5H432L426.500 303.1Z" fill="url(#sv)"/>
<rect x="419.800" y="283.3" width="7.400" height="20" rx="1.500" fill="url(#rd)"/>
<rect x="421.500" y="289.3" width="3.600" height="8" fill="#8c1414" opacity=".75"/>
<rect x="406.800" y="329.2" width="11.400" height="8.800" rx="1.200" fill="url(#sv)"/>
<path d="M426.500 323.8L432 328.4H436.800V338.8H432L426.500 343.4Z" fill="url(#sv)"/>
<rect x="419.800" y="323.6" width="7.400" height="20" rx="1.500" fill="url(#rd)"/>
<rect x="421.500" y="329.6" width="3.600" height="8" fill="#8c1414" opacity=".75"/>
<g transform="translate(385.2 257.6) rotate(0)"><rect x="-9.200" y="-5.200" width="18.400" height="10.400" rx="3.500" fill="url(#sv)"/><rect x="-7" y="-5.600" width="2.600" height="11.200" rx="1" fill="url(#sv)"/><rect x="4.400" y="-5.600" width="2.600" height="11.200" rx="1" fill="url(#sv)"/><path d="M-5.800 0h5m1.300 0h5.200" stroke="#0c0c1c" stroke-width="1.500"/></g>
<g transform="translate(385.2 293.3) rotate(0)"><rect x="-9.200" y="-5.200" width="18.400" height="10.400" rx="3.500" fill="url(#sv)"/><rect x="-7" y="-5.600" width="2.600" height="11.200" rx="1" fill="url(#sv)"/><rect x="4.400" y="-5.600" width="2.600" height="11.200" rx="1" fill="url(#sv)"/><path d="M-5.800 0h5m1.300 0h5.200" stroke="#0c0c1c" stroke-width="1.500"/></g>
<g transform="translate(385.2 333.6) rotate(0)"><rect x="-9.200" y="-5.200" width="18.400" height="10.400" rx="3.500" fill="url(#sv)"/><rect x="-7" y="-5.600" width="2.600" height="11.200" rx="1" fill="url(#sv)"/><rect x="4.400" y="-5.600" width="2.600" height="11.200" rx="1" fill="url(#sv)"/><path d="M-5.800 0h5m1.300 0h5.200" stroke="#0c0c1c" stroke-width="1.500"/></g>
<g transform="translate(349 315.3) rotate(90)"><rect x="-9.200" y="-5.200" width="18.400" height="10.400" rx="3.500" fill="url(#sv)"/><rect x="-7" y="-5.600" width="2.600" height="11.200" rx="1" fill="url(#sv)"/><rect x="4.400" y="-5.600" width="2.600" height="11.200" rx="1" fill="url(#sv)"/><path d="M-5.800 0h5m1.300 0h5.200" stroke="#0c0c1c" stroke-width="1.500"/></g>
<text x="394" y="247.6" font-size="8.6" fill="#fff" textLength="19.25" lengthAdjust="spacingAndGlyphs">MD1-1</text>
<text x="432" y="247.6" font-size="8.6" fill="#22dc55" textLength="19.25" lengthAdjust="spacingAndGlyphs">SA1-1</text>
<text x="394" y="286.1" font-size="8.6" fill="#fff" textLength="19.25" lengthAdjust="spacingAndGlyphs">MD1-2</text>
<text x="432" y="286.1" font-size="8.6" fill="#22dc55" textLength="19.25" lengthAdjust="spacingAndGlyphs">SA1-2</text>
<text x="394" y="324.7" font-size="8.6" fill="#fff" textLength="11.55" lengthAdjust="spacingAndGlyphs">MD3</text>
<text x="432" y="324.7" font-size="8.6" fill="#22dc55" textLength="11.55" lengthAdjust="spacingAndGlyphs">SA2</text>
<text x="526.8" y="262" font-size="8.6" fill="#fff" textLength="3.8" lengthAdjust="spacingAndGlyphs">1</text>
<text x="526.8" y="299.1" font-size="8.6" fill="#fff" textLength="3.8" lengthAdjust="spacingAndGlyphs">2</text>
<text x="526.8" y="336" font-size="8.6" fill="#fff" textLength="3.8" lengthAdjust="spacingAndGlyphs">3</text>
<path d="M360 270.7l2-3.300l2 3.300zM360 274.7l2-3.300l2 3.300z" fill="#7e80a8"/>
<rect x="365" y="267.3" width="13" height="7.4" fill="#82795f"/>
<text x="377.8" y="274.56" font-size="9.6" fill="#62cc50" textLength="12.45" lengthAdjust="spacingAndGlyphs" font-weight="bold" text-anchor="end">100</text>
<text x="378.8" y="274.24" font-size="9" fill="#fff" textLength="4.2" lengthAdjust="spacingAndGlyphs">%</text>
<path d="M360 307.5l2-3.300l2 3.300zM360 311.5l2-3.300l2 3.300z" fill="#7e80a8"/>
<rect x="365" y="304.1" width="13" height="7.4" fill="#82795f"/>
<text x="377.8" y="311.36" font-size="9.6" fill="#62cc50" textLength="12.45" lengthAdjust="spacingAndGlyphs" font-weight="bold" text-anchor="end">100</text>
<text x="378.8" y="311.04" font-size="9" fill="#fff" textLength="4.2" lengthAdjust="spacingAndGlyphs">%</text>
<path d="M354 341.4l2-3.300l2 3.300zM354 345.4l2-3.300l2 3.300z" fill="#7e80a8"/>
<rect x="359" y="338" width="13" height="7.4" fill="#82795f"/>
<text x="371.8" y="345.26" font-size="9.6" fill="#62cc50" textLength="12.45" lengthAdjust="spacingAndGlyphs" font-weight="bold" text-anchor="end">100</text>
<text x="372.8" y="344.94" font-size="9" fill="#fff" textLength="4.2" lengthAdjust="spacingAndGlyphs">%</text>
<text x="313.4" y="311.4" font-size="8.6" fill="#fff" textLength="11.55" lengthAdjust="spacingAndGlyphs">MD2</text>
<path d="M309 317.1l2-3.300l2 3.300zM309 321.1l2-3.300l2 3.300z" fill="#b4aecd"/>
<rect x="314.7" y="313.7" width="12.9" height="7.4" fill="#7d7d7d"/>
<text x="327.4" y="320.96" font-size="9.6" fill="#62cc50" textLength="12.45" lengthAdjust="spacingAndGlyphs" font-weight="bold" text-anchor="end">100</text>
<text x="328.4" y="320.64" font-size="9" fill="#fff" textLength="4.2" lengthAdjust="spacingAndGlyphs">%</text>
<text x="289.5" y="260.3" font-size="8.6" fill="#fff" textLength="11.55" lengthAdjust="spacingAndGlyphs">SA1</text>
<path d="M324 253H313.5V248.3L303.5 257.3L313.5 266.3V261.6H324Z" fill="#fff"/>
<path d="M332 248.8H328.8V265.7H332" fill="none" stroke="#fff" stroke-width="1.500"/>
<text x="289.5" y="336.6" font-size="8.6" fill="#fff" textLength="11.55" lengthAdjust="spacingAndGlyphs">SA2</text>
<path d="M324 329.5H313.5V324.8L303.5 333.8L313.5 342.8V338.1H324Z" fill="#fff"/>
<path d="M332 325.3H328.8V342.2H332" fill="none" stroke="#fff" stroke-width="1.500"/>
<text x="290" y="413.8" font-size="8.6" fill="#fff" textLength="7.7" lengthAdjust="spacingAndGlyphs">RA</text>
<path d="M303 406.4H313.5V401.7L323.5 410.7L313.5 419.7V415H303Z" fill="#fff"/>
<path d="M331.2 402.3H328V419.5H331.2" fill="none" stroke="#fff" stroke-width="1.500"/>
<path d="M336 250.500V264M336 327V340.500M336 404V418" stroke="#000" stroke-width="2.600"/>
<path d="M358.4 232.5V245" stroke="#e8eef8" stroke-width="1.500"/>
<circle cx="358.4" cy="232.5" r="1.600" fill="#f4f8ff"/>
<path d="M549.4 232.5V245" stroke="#e8eef8" stroke-width="1.500"/>
<circle cx="549.4" cy="232.5" r="1.600" fill="#f4f8ff"/>
<path d="M637.4 232.5V245" stroke="#e8eef8" stroke-width="1.500"/>
<circle cx="637.4" cy="232.5" r="1.600" fill="#f4f8ff"/>
<path d="M797.6 232.5V245" stroke="#e8eef8" stroke-width="1.500"/>
<circle cx="797.6" cy="232.5" r="1.600" fill="#f4f8ff"/>
<path d="M861.8 232.5V245" stroke="#e8eef8" stroke-width="1.500"/>
<circle cx="861.8" cy="232.5" r="1.600" fill="#f4f8ff"/>
<path d="M951.4 232.5V245" stroke="#e8eef8" stroke-width="1.500"/>
<circle cx="951.4" cy="232.5" r="1.600" fill="#f4f8ff"/>
<path d="M360 352.6V361.5" stroke="#e8eef8" stroke-width="1.500"/>
<circle cx="360" cy="361.5" r="1.600" fill="#f4f8ff"/>
<path d="M377.4 446.5V459.5" stroke="#e8eef8" stroke-width="1.500"/>
<circle cx="377.4" cy="459.5" r="1.600" fill="#f4f8ff"/>
<path d="M404.5 446.5V459.5" stroke="#e8eef8" stroke-width="1.500"/>
<circle cx="404.5" cy="459.5" r="1.600" fill="#f4f8ff"/>
<path d="M432.3 446.5V459.5" stroke="#e8eef8" stroke-width="1.500"/>
<circle cx="432.3" cy="459.5" r="1.600" fill="#f4f8ff"/>
<path d="M678 446V458.5" stroke="#e8eef8" stroke-width="1.500"/>
<circle cx="678" cy="458.5" r="1.600" fill="#f4f8ff"/>
<path d="M797.3 364V376" stroke="#e8eef8" stroke-width="1.500"/>
<circle cx="797.3" cy="364" r="1.600" fill="#f4f8ff"/>
<path d="M961.9 364V376" stroke="#e8eef8" stroke-width="1.500"/>
<circle cx="961.9" cy="364" r="1.600" fill="#f4f8ff"/>
<path d="M880.500 410.300H892.500" stroke="#e8eef8" stroke-width="1.500"/><path d="M879.500 410.300l3-2v4z" fill="#f4f8ff"/>
<text x="372" y="441.8" font-size="8.6" fill="#fff" textLength="11.55" lengthAdjust="spacingAndGlyphs">CO2</text>
<text x="396.7" y="441.8" font-size="8.6" fill="#fff" textLength="15.4" lengthAdjust="spacingAndGlyphs">TDED</text>
<text x="424.5" y="441.8" font-size="8.6" fill="#fff" textLength="15.4" lengthAdjust="spacingAndGlyphs">TVOC</text>
<rect x="353.400" y="380.200" width="64" height="11.300" fill="none" stroke="#fff" stroke-width="1.200"/><path d="M385.700 380.200v11.300" stroke="#fff" stroke-width="1.200"/>
<text x="356" y="389" font-size="8.6" fill="#fff" textLength="23.1" lengthAdjust="spacingAndGlyphs">RA INV</text>
<path d="M389.5 385.6l2-3.300l2 3.300zM389.5 389.6l2-3.300l2 3.300z" fill="#7e80a8"/>
<rect x="395.3" y="382.2" width="12.5" height="7.4" fill="#82795f"/>
<text x="407.6" y="389.46" font-size="9.6" fill="#62cc50" textLength="8.3" lengthAdjust="spacingAndGlyphs" font-weight="bold" text-anchor="end">50</text>
<text x="408.6" y="389.14" font-size="9" fill="#fff" textLength="4.2" lengthAdjust="spacingAndGlyphs">%</text>
<path d="M372 401.500H393V409.800H381Z" fill="url(#sv)"/><circle cx="373.200" cy="411.500" r="9.200" fill="url(#ballw)"/><circle cx="373.200" cy="411.500" r="5.600" fill="#d01818"/><circle cx="372.300" cy="410.500" r="2.500" fill="#f05040"/>
<text x="394" y="401.3" font-size="8.6" fill="#22dc55" textLength="7.7" lengthAdjust="spacingAndGlyphs">RA</text>
<g transform="translate(528.2 399.7) rotate(0)"><rect x="-9.200" y="-5.200" width="18.400" height="10.400" rx="3.500" fill="url(#sv)"/><rect x="-7" y="-5.600" width="2.600" height="11.200" rx="1" fill="url(#sv)"/><rect x="4.400" y="-5.600" width="2.600" height="11.200" rx="1" fill="url(#sv)"/><path d="M-5.800 0h5m1.300 0h5.200" stroke="#0c0c1c" stroke-width="1.500"/></g>
<text x="537.8" y="391.3" font-size="8.6" fill="#fff" textLength="11.55" lengthAdjust="spacingAndGlyphs">MD6</text>
<g transform="translate(615.8 387.8) rotate(90)"><rect x="-5.300" y="-8.600" width="10.600" height="17.200" rx="2.500" fill="url(#sh)"/><rect x="-6" y="-6.800" width="12" height="2.600" rx="1" fill="url(#sh)"/><rect x="-6" y="4.200" width="12" height="2.600" rx="1" fill="url(#sh)"/><rect x="-6" y="-1.100" width="12" height="2" fill="#141c40" transform="rotate(0)"/></g>
<g transform="translate(615.8 409) rotate(90)"><rect x="-5.300" y="-8.600" width="10.600" height="17.200" rx="2.500" fill="url(#sh)"/><rect x="-6" y="-6.800" width="12" height="2.600" rx="1" fill="url(#sh)"/><rect x="-6" y="4.200" width="12" height="2.600" rx="1" fill="url(#sh)"/><rect x="-6" y="-1.100" width="12" height="2" fill="#141c40" transform="rotate(0)"/></g>
<text x="582" y="390.9" font-size="8.6" fill="#fff" textLength="19.25" lengthAdjust="spacingAndGlyphs">MD9-1</text>
<text x="582" y="412.1" font-size="8.6" fill="#fff" textLength="19.25" lengthAdjust="spacingAndGlyphs">MD9-2</text>
<g transform="translate(569.2 362) rotate(0)"><rect x="-5.300" y="-8.600" width="10.600" height="17.200" rx="2.500" fill="url(#sh)"/><rect x="-6" y="-6.800" width="12" height="2.600" rx="1" fill="url(#sh)"/><rect x="-6" y="4.200" width="12" height="2.600" rx="1" fill="url(#sh)"/><rect x="-6" y="-1.100" width="12" height="2" fill="#141c40" transform="rotate(12)"/></g>
<g transform="translate(595.3 362) rotate(0)"><rect x="-5.300" y="-8.600" width="10.600" height="17.200" rx="2.500" fill="url(#sh)"/><rect x="-6" y="-6.800" width="12" height="2.600" rx="1" fill="url(#sh)"/><rect x="-6" y="4.200" width="12" height="2.600" rx="1" fill="url(#sh)"/><rect x="-6" y="-1.100" width="12" height="2" fill="#141c40" transform="rotate(12)"/></g>
<text x="555.6" y="334.4" font-size="8.6" fill="#fff" textLength="19.25" lengthAdjust="spacingAndGlyphs">MD8-1</text>
<text x="586.8" y="334.4" font-size="8.6" fill="#fff" textLength="19.25" lengthAdjust="spacingAndGlyphs">MD8-2</text>
<path d="M555 339.5l2-3.300l2 3.300zM555 343.5l2-3.300l2 3.300z" fill="#7e80a8"/>
<rect x="560.7" y="336.1" width="13.6" height="7.4" fill="#82795f"/>
<text x="574.1" y="343.36" font-size="9.6" fill="#62cc50" textLength="8.3" lengthAdjust="spacingAndGlyphs" font-weight="bold" text-anchor="end">14</text>
<text x="575.1" y="343.04" font-size="9" fill="#fff" textLength="4.2" lengthAdjust="spacingAndGlyphs">%</text>
<path d="M586 339.5l2-3.300l2 3.300zM586 343.5l2-3.300l2 3.300z" fill="#7e80a8"/>
<rect x="592" y="336.1" width="13.5" height="7.4" fill="#82795f"/>
<text x="605.3" y="343.36" font-size="9.6" fill="#62cc50" textLength="8.3" lengthAdjust="spacingAndGlyphs" font-weight="bold" text-anchor="end">14</text>
<text x="606.3" y="343.04" font-size="9" fill="#fff" textLength="4.2" lengthAdjust="spacingAndGlyphs">%</text>
<g transform="translate(834.4 362) rotate(0)"><rect x="-5.300" y="-8.600" width="10.600" height="17.200" rx="2.500" fill="url(#sh)"/><rect x="-6" y="-6.800" width="12" height="2.600" rx="1" fill="url(#sh)"/><rect x="-6" y="4.200" width="12" height="2.600" rx="1" fill="url(#sh)"/><rect x="-6" y="-1.100" width="12" height="2" fill="#141c40" transform="rotate(0)"/></g>
<g transform="translate(857.3 362) rotate(0)"><rect x="-5.300" y="-8.600" width="10.600" height="17.200" rx="2.500" fill="url(#sh)"/><rect x="-6" y="-6.800" width="12" height="2.600" rx="1" fill="url(#sh)"/><rect x="-6" y="4.200" width="12" height="2.600" rx="1" fill="url(#sh)"/><rect x="-6" y="-1.100" width="12" height="2" fill="#141c40" transform="rotate(0)"/></g>
<text x="819.4" y="350.7" font-size="8.6" fill="#fff" textLength="23.1" lengthAdjust="spacingAndGlyphs">MD11-1</text>
<text x="851" y="350.7" font-size="8.6" fill="#fff" textLength="23.1" lengthAdjust="spacingAndGlyphs">MD11-2</text>
<g transform="translate(455 452.2) rotate(0)"><rect x="-5.300" y="-8.600" width="10.600" height="17.200" rx="2.500" fill="url(#sh)"/><rect x="-6" y="-6.800" width="12" height="2.600" rx="1" fill="url(#sh)"/><rect x="-6" y="4.200" width="12" height="2.600" rx="1" fill="url(#sh)"/><rect x="-6" y="-1.100" width="12" height="2" fill="#141c40" transform="rotate(0)"/></g>
<text x="449.3" y="438.1" font-size="8.6" fill="#fff" textLength="11.55" lengthAdjust="spacingAndGlyphs">MD5</text>
<path d="M446.3 466.7V469.5H464.3V466.7" fill="none" stroke="#fff" stroke-width="1.400"/>
<path d="M451.1 478.2V488.3H446.3L455.3 498.3L464.3 488.3H459.5V478.2Z" fill="#fff"/>
<text x="439" y="487.1" font-size="8.6" fill="#fff" textLength="7.7" lengthAdjust="spacingAndGlyphs">SM</text>
<g transform="translate(498.2 452.2) rotate(90)"><rect x="-9.200" y="-5.200" width="18.400" height="10.400" rx="3.500" fill="url(#sv)"/><rect x="-7" y="-5.600" width="2.600" height="11.200" rx="1" fill="url(#sv)"/><rect x="4.400" y="-5.600" width="2.600" height="11.200" rx="1" fill="url(#sv)"/><path d="M-5.800 0h5m1.300 0h5.200" stroke="#0c0c1c" stroke-width="1.500"/></g>
<text x="492" y="437.6" font-size="8.6" fill="#fff" textLength="11.55" lengthAdjust="spacingAndGlyphs">MD7</text>
<path d="M489.4 466.7V469.5H507.2V466.7" fill="none" stroke="#d8ecfa" stroke-width="1.400"/>
<g transform="translate(569.2 452.4) rotate(0)"><rect x="-5.300" y="-8.600" width="10.600" height="17.200" rx="2.500" fill="url(#sh)"/><rect x="-6" y="-6.800" width="12" height="2.600" rx="1" fill="url(#sh)"/><rect x="-6" y="4.200" width="12" height="2.600" rx="1" fill="url(#sh)"/><rect x="-6" y="-1.100" width="12" height="2" fill="#141c40" transform="rotate(0)"/></g>
<g transform="translate(595.5 452.4) rotate(0)"><rect x="-5.300" y="-8.600" width="10.600" height="17.200" rx="2.500" fill="url(#sh)"/><rect x="-6" y="-6.800" width="12" height="2.600" rx="1" fill="url(#sh)"/><rect x="-6" y="4.200" width="12" height="2.600" rx="1" fill="url(#sh)"/><rect x="-6" y="-1.100" width="12" height="2" fill="#141c40" transform="rotate(0)"/></g>
<text x="536.6" y="461.4" font-size="8.6" fill="#fff" textLength="23.1" lengthAdjust="spacingAndGlyphs">MD10-1</text>
<text x="603.6" y="461.4" font-size="8.6" fill="#fff" textLength="23.1" lengthAdjust="spacingAndGlyphs">MD10-2</text>
<path d="M560 466.7V469.5H578.5V466.7" fill="none" stroke="#fff" stroke-width="1.400"/>
<path d="M586.3 466.7V469.5H604.8V466.7" fill="none" stroke="#fff" stroke-width="1.400"/>
<path d="M565.3 493.5V482.7H560.8L569.4 473.2L578 482.7H573.5V493.5Z" fill="#fff"/>
<path d="M591.5 493.5V482.7H587L595.6 473.2L604.2 482.7H599.7V493.5Z" fill="#fff"/>
<text x="577.8" y="492.8" font-size="8.6" fill="#fff" textLength="7.7" lengthAdjust="spacingAndGlyphs">OA</text>
<text x="603.8" y="492.8" font-size="8.6" fill="#fff" textLength="7.7" lengthAdjust="spacingAndGlyphs">OA</text>
<g transform="translate(848.2 452.4) rotate(0)"><rect x="-5.300" y="-8.600" width="10.600" height="17.200" rx="2.500" fill="url(#sh)"/><rect x="-6" y="-6.800" width="12" height="2.600" rx="1" fill="url(#sh)"/><rect x="-6" y="4.200" width="12" height="2.600" rx="1" fill="url(#sh)"/><rect x="-6" y="-1.100" width="12" height="2" fill="#141c40" transform="rotate(0)"/></g>
<text x="822.6" y="461.6" font-size="8.6" fill="#fff" textLength="15.4" lengthAdjust="spacingAndGlyphs">MD13</text>
<path d="M841 466.7V469.5H859.5V466.7" fill="none" stroke="#fff" stroke-width="1.400"/>
<path d="M845.5 475.4V484.8H841L850.2 495.2L859.4 484.8H854.9V475.4Z" fill="#fff"/>
<text x="860.5" y="481.7" font-size="8.6" fill="#fff" textLength="7.7" lengthAdjust="spacingAndGlyphs">EA</text>
<path d="M677.6 275.5L728.3 285.6L728.3 416L677.6 384.9Z" fill="url(#slabR)"/>
<path d="M728.3 285.6L733.3 287V410.5L728.3 416Z" fill="url(#slabside)"/>
<path d="M677.6 275.5L682.6 273.5L733.3 287L728.3 285.6Z" fill="#e4e4e4"/>
<g transform="translate(700.4 341) skewY(3)">
<ellipse cx="0" cy="0" rx="20.6" ry="54.2" fill="#8a8a8a"/>
<ellipse cx="0" cy="0" rx="19.6" ry="53.2" fill="url(#whw)"/>
<ellipse cx="0" cy="0" rx="17" ry="49.4" fill="url(#whl)"/>
<path d="M0 -2V-49.4M0 0L-13.91 26M0 0L13.91 29.12" stroke="#e3e9ee" stroke-width="3.200" fill="none"/>
<path d="M1.300 -2V-49.4M1 1.500L14.91 30.62" stroke="#a9b4bc" stroke-width=".800" fill="none"/>
<ellipse cx="0" cy="-1" rx="2.800" ry="5.200" fill="#cfcfcf" stroke="#8a8a8a" stroke-width=".600"/>
</g>
<path d="M898.7 270.2L949.8 281.1L949.8 412L898.7 381Z" fill="url(#slabR)"/>
<path d="M949.8 281.1L956.7 283V407.4L949.8 412Z" fill="url(#slabside)"/>
<path d="M898.7 270.2L903.7 268.2L956.7 283L949.8 281.1Z" fill="#e4e4e4"/>
<g transform="translate(922 335.8) skewY(3)">
<ellipse cx="0" cy="0" rx="21.6" ry="54.5" fill="#8a8a8a"/>
<ellipse cx="0" cy="0" rx="20.6" ry="53.5" fill="url(#whw)"/>
<ellipse cx="0" cy="0" rx="18.2" ry="49.9" fill="url(#whw)" stroke="#a8a8a8" stroke-width=".700"/>
<path d="M0 3L10.3 -38.7M0 3L15.05 32.43" stroke="#a2a2a2" stroke-width="2.200" fill="none"/>
<path d="M0 -1L-17.3 -5.500V-1.500L0 5Z" fill="#a8a8a8"/>
<ellipse cx="0" cy="3" rx="2.600" ry="4.800" fill="#b9b9b9" stroke="#858585" stroke-width=".600"/>
</g>
<text x="887.1" y="288.3" font-size="8.6" fill="#22dc55" textLength="7.7" lengthAdjust="spacingAndGlyphs">AH</text>
<rect x="742.8" y="295.4" width="7" height="6" fill="#12b012"/><rect x="744" y="296.4" width="4.600" height="3.500" fill="#5dff5d"/>
<text x="754.1" y="307.7" font-size="8.6" fill="#22dc55" textLength="7.7" lengthAdjust="spacingAndGlyphs">01</text>
<path d="M742.300 310.200l7.700-4v8z" fill="#fff"/>
<rect x="742.8" y="317.9" width="7" height="6" fill="#12b012"/><rect x="744" y="318.9" width="4.600" height="3.500" fill="#5dff5d"/>
<text x="754.1" y="330.8" font-size="8.6" fill="#22dc55" textLength="7.7" lengthAdjust="spacingAndGlyphs">02</text>
<path d="M742.300 333.500l7.700-4v8z" fill="#fff"/>
<path d="M806.7 272.6L823.7 275.6V302.6L806.7 298.6Z" fill="url(#slab)"/>
<path d="M806.7 272.6L814.7 274V300.4L806.7 298.6Z" fill="#f4f4f4"/>
<path d="M806.7 272.6L809.2 271.8L825.7 274.8L823.7 275.6Z" fill="#e0e0e0"/><path d="M823.7 275.6L825.7 274.8V301.6L823.7 302.6Z" fill="#6e6e6e"/>
<path d="M822.2 280.6L816.2 294.6" stroke="#999" stroke-width=".800"/>
<text x="817.2" y="281.08" font-size="5.5" fill="#fff" textLength="3.5" lengthAdjust="spacingAndGlyphs" font-weight="bold">C</text>
<text x="817.2" y="299.08" font-size="5.5" fill="#fff" textLength="3.5" lengthAdjust="spacingAndGlyphs" font-weight="bold">C</text>
<path d="M647.6 404.2L664.6 407.2V434.2L647.6 430.2Z" fill="url(#slab)"/>
<path d="M647.6 404.2L655.6 405.6V432L647.6 430.2Z" fill="#f4f4f4"/>
<path d="M647.6 404.2L650.1 403.4L666.6 406.4L664.6 407.2Z" fill="#e0e0e0"/><path d="M664.6 407.2L666.6 406.4V433.2L664.6 434.2Z" fill="#6e6e6e"/>
<path d="M663.1 412.2L657.1 426.2" stroke="#999" stroke-width=".800"/>
<text x="658.1" y="412.68" font-size="5.5" fill="#fff" textLength="3.5" lengthAdjust="spacingAndGlyphs" font-weight="bold">H</text>
<text x="658.1" y="430.68" font-size="5.5" fill="#fff" textLength="3.5" lengthAdjust="spacingAndGlyphs" font-weight="bold">C</text>
<path d="M821 392.7L815.500 397.3H811.300V407.7H815.500L821 412.3Z" fill="url(#sv)"/>
<rect x="820" y="392.5" width="8.200" height="20" rx="1.500" fill="url(#gn)"/>
<rect x="822.300" y="398.5" width="3.600" height="8" fill="#0a5c16" opacity=".7"/>
<rect x="829.800" y="398.1" width="11.400" height="8.800" rx="1.200" fill="url(#sv)"/>
<path d="M821 418L815.500 422.6H811.300V433H815.500L821 437.6Z" fill="url(#sv)"/>
<rect x="820" y="417.8" width="8.200" height="20" rx="1.500" fill="url(#gn)"/>
<rect x="822.300" y="423.8" width="3.600" height="8" fill="#0a5c16" opacity=".7"/>
<rect x="829.800" y="423.4" width="11.400" height="8.800" rx="1.200" fill="url(#sv)"/>
<text x="841.5" y="397.8" font-size="8.6" fill="#22dc55" textLength="11.55" lengthAdjust="spacingAndGlyphs">EA1</text>
<text x="841.5" y="423.4" font-size="8.6" fill="#22dc55" textLength="11.55" lengthAdjust="spacingAndGlyphs">EA2</text>
<path d="M980.500 262V276.500M980.500 307.500V322" stroke="#000" stroke-width="2.600"/><path d="M980.600 383V397.500M980.600 424.300V438.800" stroke="#000" stroke-width="1.800"/>
<g transform="translate(979.5 269.2) rotate(0)"><rect x="-9.200" y="-5.200" width="18.400" height="10.400" rx="3.500" fill="url(#sv)"/><rect x="-7" y="-5.600" width="2.600" height="11.200" rx="1" fill="url(#sv)"/><rect x="4.400" y="-5.600" width="2.600" height="11.200" rx="1" fill="url(#sv)"/><path d="M-5.800 0h5m1.300 0h5.200" stroke="#0c0c1c" stroke-width="1.500"/></g>
<path d="M989.8 260.2H993.3V278.2H989.8" fill="none" stroke="#fff" stroke-width="1.500"/>
<path d="M1017.5 264.9H1007V260.2L997 269.2L1007 278.2V273.5H1017.5Z" fill="#fff"/>
<text x="1023.5" y="272.3" font-size="8.6" fill="#fff" textLength="7.7" lengthAdjust="spacingAndGlyphs">OA</text>
<text x="982.8" y="287.6" font-size="8.6" fill="#fff" textLength="15.4" lengthAdjust="spacingAndGlyphs">MD15</text>
<path d="M984.3 291.9l2-3.300l2 3.300zM984.3 295.9l2-3.300l2 3.300z" fill="#b4aecd"/>
<rect x="990.6" y="288.5" width="12.4" height="7.4" fill="#7d7d7d"/>
<text x="1002.8" y="295.76" font-size="9.6" fill="#62cc50" textLength="12.45" lengthAdjust="spacingAndGlyphs" font-weight="bold" text-anchor="end">100</text>
<text x="1003.8" y="295.44" font-size="9" fill="#fff" textLength="4.2" lengthAdjust="spacingAndGlyphs">%</text>
<g transform="translate(979.5 314.7) rotate(0)"><rect x="-9.200" y="-5.200" width="18.400" height="10.400" rx="3.500" fill="url(#sv)"/><rect x="-7" y="-5.600" width="2.600" height="11.200" rx="1" fill="url(#sv)"/><rect x="4.400" y="-5.600" width="2.600" height="11.200" rx="1" fill="url(#sv)"/><path d="M-5.800 0h5m1.300 0h5.200" stroke="#0c0c1c" stroke-width="1.500"/></g>
<path d="M989.8 305.7H993.3V323.7H989.8" fill="none" stroke="#fff" stroke-width="1.500"/>
<path d="M1017.5 310.4H1007V305.7L997 314.7L1007 323.7V319H1017.5Z" fill="#fff"/>
<text x="1023.5" y="317.8" font-size="8.6" fill="#fff" textLength="7.7" lengthAdjust="spacingAndGlyphs">OA</text>
<text x="982.8" y="333.1" font-size="8.6" fill="#fff" textLength="15.4" lengthAdjust="spacingAndGlyphs">MD16</text>
<path d="M984.3 337.4l2-3.300l2 3.300zM984.3 341.4l2-3.300l2 3.300z" fill="#b4aecd"/>
<rect x="990.6" y="334" width="12.4" height="7.4" fill="#7d7d7d"/>
<text x="1002.8" y="341.26" font-size="9.6" fill="#62cc50" textLength="12.45" lengthAdjust="spacingAndGlyphs" font-weight="bold" text-anchor="end">100</text>
<text x="1003.8" y="340.94" font-size="9" fill="#fff" textLength="4.2" lengthAdjust="spacingAndGlyphs">%</text>
<g transform="translate(979.5 390.2) rotate(0)"><rect x="-9.200" y="-5.200" width="18.400" height="10.400" rx="3.500" fill="url(#sv)"/><rect x="-7" y="-5.600" width="2.600" height="11.200" rx="1" fill="url(#sv)"/><rect x="4.400" y="-5.600" width="2.600" height="11.200" rx="1" fill="url(#sv)"/><path d="M-5.800 0h5m1.300 0h5.200" stroke="#0c0c1c" stroke-width="1.500"/></g>
<path d="M989.8 381.2H993.3V399.2H989.8" fill="none" stroke="#fff" stroke-width="1.500"/>
<path d="M999 385.9H1009.2V381.2L1019.2 390.2L1009.2 399.2V394.5H999Z" fill="#fff"/>
<text x="1023.5" y="393.3" font-size="8.6" fill="#fff" textLength="7.7" lengthAdjust="spacingAndGlyphs">EA</text>
<text x="982.8" y="408.6" font-size="8.6" fill="#fff" textLength="23.1" lengthAdjust="spacingAndGlyphs">MD14-1</text>
<path d="M984.3 412.9l2-3.300l2 3.300zM984.3 416.9l2-3.300l2 3.300z" fill="#b4aecd"/>
<rect x="990.6" y="409.5" width="12.4" height="7.4" fill="#7d7d7d"/>
<text x="1002.8" y="416.76" font-size="9.6" fill="#62cc50" textLength="12.45" lengthAdjust="spacingAndGlyphs" font-weight="bold" text-anchor="end">100</text>
<text x="1003.8" y="416.44" font-size="9" fill="#fff" textLength="4.2" lengthAdjust="spacingAndGlyphs">%</text>
<g transform="translate(979.5 431.5) rotate(0)"><rect x="-9.200" y="-5.200" width="18.400" height="10.400" rx="3.500" fill="url(#sv)"/><rect x="-7" y="-5.600" width="2.600" height="11.200" rx="1" fill="url(#sv)"/><rect x="4.400" y="-5.600" width="2.600" height="11.200" rx="1" fill="url(#sv)"/><path d="M-5.800 0h5m1.300 0h5.200" stroke="#0c0c1c" stroke-width="1.500"/></g>
<path d="M989.8 422.5H993.3V440.5H989.8" fill="none" stroke="#fff" stroke-width="1.500"/>
<path d="M999 427.2H1009.2V422.5L1019.2 431.5L1009.2 440.5V435.8H999Z" fill="#fff"/>
<text x="1023.5" y="434.6" font-size="8.6" fill="#fff" textLength="7.7" lengthAdjust="spacingAndGlyphs">EA</text>
<text x="982.8" y="449.9" font-size="8.6" fill="#fff" textLength="23.1" lengthAdjust="spacingAndGlyphs">MD14-2</text>
<path d="M984.3 454.2l2-3.300l2 3.300zM984.3 458.2l2-3.300l2 3.300z" fill="#b4aecd"/>
<rect x="990.6" y="450.8" width="12.4" height="7.4" fill="#7d7d7d"/>
<text x="1002.8" y="458.06" font-size="9.6" fill="#62cc50" textLength="12.45" lengthAdjust="spacingAndGlyphs" font-weight="bold" text-anchor="end">100</text>
<text x="1003.8" y="457.74" font-size="9" fill="#fff" textLength="4.2" lengthAdjust="spacingAndGlyphs">%</text>
<path d="M555 250.7l2-3.300l2 3.300zM555 254.7l2-3.300l2 3.300z" fill="#7e80a8"/>
<rect x="560" y="247.3" width="22.6" height="7.4" fill="#82795f"/>
<text x="582.4" y="254.56" font-size="9.6" fill="#62cc50" textLength="16.6" lengthAdjust="spacingAndGlyphs" font-weight="bold" text-anchor="end">21.4</text>
<text x="583.2" y="254.1" font-size="8.6" fill="#e6e6e6" textLength="7.6" lengthAdjust="spacingAndGlyphs">℃</text>
<path d="M555 259.3l2-3.300l2 3.300zM555 263.3l2-3.300l2 3.300z" fill="#7e80a8"/>
<rect x="560" y="255.9" width="22.6" height="7.4" fill="#82795f"/>
<text x="582.4" y="263.16" font-size="9.6" fill="#62cc50" textLength="16.6" lengthAdjust="spacingAndGlyphs" font-weight="bold" text-anchor="end">10.8</text>
<text x="583.2" y="262.7" font-size="8.6" fill="#e6e6e6" textLength="7.6" lengthAdjust="spacingAndGlyphs">℃</text>
<text x="590.5" y="262.84" font-size="9" fill="#fff" textLength="8.4" lengthAdjust="spacingAndGlyphs">DP</text>
<path d="M643 250.7l2-3.300l2 3.300zM643 254.7l2-3.300l2 3.300z" fill="#7e80a8"/>
<rect x="648" y="247.3" width="22.3" height="7.4" fill="#82795f"/>
<text x="670.1" y="254.56" font-size="9.6" fill="#62cc50" textLength="16.6" lengthAdjust="spacingAndGlyphs" font-weight="bold" text-anchor="end">20.7</text>
<text x="670.9" y="254.1" font-size="8.6" fill="#e6e6e6" textLength="7.6" lengthAdjust="spacingAndGlyphs">℃</text>
<path d="M643 259.3l2-3.300l2 3.300zM643 263.3l2-3.300l2 3.300z" fill="#7e80a8"/>
<rect x="648" y="255.9" width="22.3" height="7.4" fill="#82795f"/>
<text x="670.1" y="263.16" font-size="9.6" fill="#62cc50" textLength="16.6" lengthAdjust="spacingAndGlyphs" font-weight="bold" text-anchor="end">10.3</text>
<text x="670.9" y="262.7" font-size="8.6" fill="#e6e6e6" textLength="7.6" lengthAdjust="spacingAndGlyphs">℃</text>
<text x="678.2" y="262.84" font-size="9" fill="#fff" textLength="8.4" lengthAdjust="spacingAndGlyphs">DP</text>
<path d="M755.8 250.9l2-3.300l2 3.300zM755.8 254.9l2-3.300l2 3.300z" fill="#7e80a8"/>
<rect x="761.6" y="247.5" width="20.4" height="7.4" fill="#82795f"/>
<text x="781.8" y="254.76" font-size="9.6" fill="#62cc50" textLength="16.6" lengthAdjust="spacingAndGlyphs" font-weight="bold" text-anchor="end">20.5</text>
<text x="782.6" y="254.3" font-size="8.6" fill="#e6e6e6" textLength="7.6" lengthAdjust="spacingAndGlyphs">℃</text>
<path d="M755.8 259.5l2-3.300l2 3.300zM755.8 263.5l2-3.300l2 3.300z" fill="#7e80a8"/>
<rect x="761.6" y="256.1" width="20.4" height="7.4" fill="#82795f"/>
<text x="781.8" y="263.36" font-size="9.6" fill="#62cc50" textLength="12.45" lengthAdjust="spacingAndGlyphs" font-weight="bold" text-anchor="end">9.7</text>
<text x="782.6" y="262.9" font-size="8.6" fill="#e6e6e6" textLength="7.6" lengthAdjust="spacingAndGlyphs">℃</text>
<text x="789.9" y="263.04" font-size="9" fill="#fff" textLength="8.4" lengthAdjust="spacingAndGlyphs">DP</text>
<path d="M866.5 250.4l2-3.300l2 3.300zM866.5 254.4l2-3.300l2 3.300z" fill="#7e80a8"/>
<rect x="871.5" y="247" width="21" height="7.4" fill="#82795f"/>
<text x="892.3" y="254.26" font-size="9.6" fill="#62cc50" textLength="16.6" lengthAdjust="spacingAndGlyphs" font-weight="bold" text-anchor="end">20.8</text>
<text x="893.1" y="253.8" font-size="8.6" fill="#e6e6e6" textLength="7.6" lengthAdjust="spacingAndGlyphs">℃</text>
<path d="M866.5 259.5l2-3.300l2 3.300zM866.5 263.5l2-3.300l2 3.300z" fill="#7e80a8"/>
<rect x="871.5" y="256.1" width="21" height="7.4" fill="#82795f"/>
<text x="892.3" y="263.36" font-size="9.6" fill="#62cc50" textLength="16.6" lengthAdjust="spacingAndGlyphs" font-weight="bold" text-anchor="end">10.4</text>
<text x="893.1" y="262.9" font-size="8.6" fill="#e6e6e6" textLength="7.6" lengthAdjust="spacingAndGlyphs">℃</text>
<text x="900.4" y="263.04" font-size="9" fill="#fff" textLength="8.4" lengthAdjust="spacingAndGlyphs">DP</text>
<path d="M763.8 385.2l2-3.300l2 3.300zM763.8 389.2l2-3.300l2 3.300z" fill="#7e80a8"/>
<rect x="770.6" y="381.8" width="19.9" height="7.4" fill="#82795f"/>
<text x="790.3" y="389.06" font-size="9.6" fill="#62cc50" textLength="16.6" lengthAdjust="spacingAndGlyphs" font-weight="bold" text-anchor="end">17.8</text>
<text x="791.1" y="388.6" font-size="8.6" fill="#e6e6e6" textLength="7.6" lengthAdjust="spacingAndGlyphs">℃</text>
<path d="M763.8 394.2l2-3.300l2 3.300zM763.8 398.2l2-3.300l2 3.300z" fill="#7e80a8"/>
<rect x="770.6" y="390.8" width="19.9" height="7.4" fill="#82795f"/>
<text x="790.3" y="398.06" font-size="9.6" fill="#62cc50" textLength="12.45" lengthAdjust="spacingAndGlyphs" font-weight="bold" text-anchor="end">6.8</text>
<text x="791.1" y="397.6" font-size="8.6" fill="#e6e6e6" textLength="7.6" lengthAdjust="spacingAndGlyphs">℃</text>
<text x="798.4" y="397.74" font-size="9" fill="#fff" textLength="8.4" lengthAdjust="spacingAndGlyphs">DP</text>
<path d="M682.5 430.9l2-3.300l2 3.300zM682.5 434.9l2-3.300l2 3.300z" fill="#7e80a8"/>
<rect x="688.8" y="427.5" width="20.7" height="7.4" fill="#82795f"/>
<text x="709.3" y="434.76" font-size="9.6" fill="#62cc50" textLength="16.6" lengthAdjust="spacingAndGlyphs" font-weight="bold" text-anchor="end">18.5</text>
<text x="710.1" y="434.3" font-size="8.6" fill="#e6e6e6" textLength="7.6" lengthAdjust="spacingAndGlyphs">℃</text>
<path d="M682.5 439.6l2-3.300l2 3.300zM682.5 443.6l2-3.300l2 3.300z" fill="#7e80a8"/>
<rect x="688.8" y="436.2" width="20.7" height="7.4" fill="#82795f"/>
<text x="709.3" y="443.46" font-size="9.6" fill="#62cc50" textLength="12.45" lengthAdjust="spacingAndGlyphs" font-weight="bold" text-anchor="end">8.0</text>
<text x="710.1" y="443" font-size="8.6" fill="#e6e6e6" textLength="7.6" lengthAdjust="spacingAndGlyphs">℃</text>
<text x="717.4" y="443.14" font-size="9" fill="#fff" textLength="8.4" lengthAdjust="spacingAndGlyphs">DP</text>
<path d="M891.6 419.5l2-3.300l2 3.300zM891.6 423.5l2-3.300l2 3.300z" fill="#7e80a8"/>
<rect x="895.9" y="416.1" width="22.6" height="7.4" fill="#82795f"/>
<text x="918.3" y="423.36" font-size="9.6" fill="#62cc50" textLength="16.6" lengthAdjust="spacingAndGlyphs" font-weight="bold" text-anchor="end">24.6</text>
<text x="919.1" y="422.9" font-size="8.6" fill="#e6e6e6" textLength="7.6" lengthAdjust="spacingAndGlyphs">℃</text>
<path d="M891.6 428.3l2-3.300l2 3.300zM891.6 432.3l2-3.300l2 3.300z" fill="#7e80a8"/>
<rect x="895.9" y="424.9" width="22.6" height="7.4" fill="#82795f"/>
<text x="918.3" y="432.16" font-size="9.6" fill="#62cc50" textLength="16.6" lengthAdjust="spacingAndGlyphs" font-weight="bold" text-anchor="end">12.2</text>
<text x="919.1" y="431.7" font-size="8.6" fill="#e6e6e6" textLength="7.6" lengthAdjust="spacingAndGlyphs">℃</text>
<text x="926.4" y="431.84" font-size="9" fill="#fff" textLength="8.4" lengthAdjust="spacingAndGlyphs">DP</text>
<path d="M922.3 250.4l2-3.300l2 3.300zM922.3 254.4l2-3.300l2 3.300z" fill="#7e80a8"/>
<rect x="927" y="247" width="22.5" height="7.4" fill="#7d7d74"/>
<text x="949.3" y="254.26" font-size="9.6" fill="#62cc50" textLength="16.6" lengthAdjust="spacingAndGlyphs" font-weight="bold" text-anchor="end">18.1</text>
<text x="950.1" y="253.8" font-size="8.6" fill="#e6e6e6" textLength="7.6" lengthAdjust="spacingAndGlyphs">℃</text>
<path d="M922.3 261.2l2-3.300l2 3.300zM922.3 265.2l2-3.300l2 3.300z" fill="#7e80a8"/>
<rect x="927" y="257.8" width="22.5" height="7.4" fill="#7d7d74"/>
<text x="949.3" y="265.06" font-size="9.6" fill="#62cc50" textLength="12.45" lengthAdjust="spacingAndGlyphs" font-weight="bold" text-anchor="end">7.8</text>
<text x="950.1" y="264.6" font-size="8.6" fill="#e6e6e6" textLength="7.6" lengthAdjust="spacingAndGlyphs">℃</text>
<text x="957.4" y="264.74" font-size="9" fill="#fff" textLength="8.4" lengthAdjust="spacingAndGlyphs">DP</text>
<path d="M985.6 357.7l2-3.300l2 3.300zM985.6 361.7l2-3.300l2 3.300z" fill="#b4aecd"/>
<rect x="990.6" y="354.3" width="21.9" height="7.4" fill="#7d7d7d"/>
<text x="1012.3" y="361.56" font-size="9.6" fill="#62cc50" textLength="16.6" lengthAdjust="spacingAndGlyphs" font-weight="bold" text-anchor="end">16.8</text>
<text x="1013.1" y="361.1" font-size="8.6" fill="#e6e6e6" textLength="7.6" lengthAdjust="spacingAndGlyphs">℃</text>
<path d="M985.6 366.4l2-3.300l2 3.300zM985.6 370.4l2-3.300l2 3.300z" fill="#b4aecd"/>
<rect x="990.6" y="363" width="21.9" height="7.4" fill="#7d7d7d"/>
<text x="1012.3" y="370.26" font-size="9.6" fill="#62cc50" textLength="12.45" lengthAdjust="spacingAndGlyphs" font-weight="bold" text-anchor="end">8.2</text>
<text x="1013.1" y="369.8" font-size="8.6" fill="#e6e6e6" textLength="7.6" lengthAdjust="spacingAndGlyphs">℃</text>
<text x="1020.4" y="369.94" font-size="9" fill="#fff" textLength="8.4" lengthAdjust="spacingAndGlyphs">DP</text>
<text x="191" y="110.24" font-size="9" fill="#fff" textLength="40.25" lengthAdjust="spacingAndGlyphs">ACD-22-S01</text>
<rect x="236.5" y="103.8" width="7" height="6" fill="#d02010"/><rect x="237.7" y="104.8" width="4.600" height="3.500" fill="#ff6a50"/>
<text x="245" y="110.04" font-size="9" fill="#ff2a1a" textLength="24.15" lengthAdjust="spacingAndGlyphs">群発停</text>
<path d="M190.3 114H316V149.5H190.3ZM190.3 126H316M190.3 137.6H316M262.5 114V149.5" fill="none" stroke="#c9c9c9" stroke-width="1"/>
<text x="192" y="122.88" font-size="8" fill="#fff" textLength="48.3" lengthAdjust="spacingAndGlyphs">各室内最大温度</text>
<path d="M266.5 119.7l2-3.300l2 3.300zM266.5 123.7l2-3.300l2 3.300z" fill="#b4aecd"/>
<rect x="273" y="116.2" width="22" height="7.6" fill="#7d7d7d"/>
<text x="294.8" y="123.56" font-size="9.6" fill="#3cd04c" textLength="16.6" lengthAdjust="spacingAndGlyphs" font-weight="bold" text-anchor="end">24.8</text>
<text x="295.6" y="123.1" font-size="8.6" fill="#e6e6e6" textLength="7.6" lengthAdjust="spacingAndGlyphs">℃</text>
<text x="192" y="134.68" font-size="8" fill="#fff" textLength="34.5" lengthAdjust="spacingAndGlyphs">室内湿度SP</text>
<rect x="273" y="128" width="22" height="7.6" fill="#7d7d7d"/>
<text x="294.8" y="135.36" font-size="9.6" fill="#5ad6da" textLength="8.3" lengthAdjust="spacingAndGlyphs" font-weight="bold" text-anchor="end">50</text>
<text x="295.8" y="135.04" font-size="9" fill="#fff" textLength="12.6" lengthAdjust="spacingAndGlyphs">%RH</text>
<text x="192" y="146.43" font-size="8" fill="#fff" textLength="48.3" lengthAdjust="spacingAndGlyphs">各室内最大湿度</text>
<path d="M266.5 143.25l2-3.300l2 3.300zM266.5 147.25l2-3.300l2 3.300z" fill="#b4aecd"/>
<rect x="273" y="139.75" width="22" height="7.6" fill="#7d7d7d"/>
<text x="294.8" y="147.11" font-size="9.6" fill="#3cd04c" textLength="8.3" lengthAdjust="spacingAndGlyphs" font-weight="bold" text-anchor="end">47</text>
<text x="295.8" y="146.79" font-size="9" fill="#fff" textLength="12.6" lengthAdjust="spacingAndGlyphs">%RH</text>
<text x="191" y="198.74" font-size="9" fill="#fff" textLength="12.08" lengthAdjust="spacingAndGlyphs">SA1</text>
<path d="M190.3 200.5H283V293H190.3ZM190.3 212H283M190.3 229H283M190.3 241H283M190.3 252.5H283M190.3 269.5H283M190.3 281H283M228 200.5V293" fill="none" stroke="#c9c9c9" stroke-width="1"/>
<text x="192" y="209.13" font-size="8" fill="#fff" textLength="34.5" lengthAdjust="spacingAndGlyphs">給気温度SP</text>
<rect x="238" y="202.45" width="26" height="7.6" fill="#7d7d7d"/>
<text x="263.8" y="209.81" font-size="9.6" fill="#5ad6da" textLength="16.6" lengthAdjust="spacingAndGlyphs" font-weight="bold" text-anchor="end">26.0</text>
<text x="264.6" y="209.35" font-size="8.6" fill="#e6e6e6" textLength="7.6" lengthAdjust="spacingAndGlyphs">℃</text>
<text x="192" y="219.78" font-size="8" fill="#fff" textLength="34.5" lengthAdjust="spacingAndGlyphs">給気温度SP</text>
<text x="191" y="227.38" font-size="8" fill="#fff" textLength="20.7" lengthAdjust="spacingAndGlyphs">(自動)</text>
<path d="M232 220.2l2-3.300l2 3.300zM232 224.2l2-3.300l2 3.300z" fill="#b4aecd"/>
<rect x="238" y="216.7" width="26" height="7.6" fill="#7d7d7d"/>
<text x="263.8" y="224.06" font-size="9.6" fill="#3cd04c" textLength="16.6" lengthAdjust="spacingAndGlyphs" font-weight="bold" text-anchor="end">26.0</text>
<text x="264.6" y="223.6" font-size="8.6" fill="#e6e6e6" textLength="7.6" lengthAdjust="spacingAndGlyphs">℃</text>
<text x="192" y="237.88" font-size="8" fill="#fff" textLength="27.6" lengthAdjust="spacingAndGlyphs">給気温度</text>
<path d="M232 234.7l2-3.300l2 3.300zM232 238.7l2-3.300l2 3.300z" fill="#b4aecd"/>
<rect x="238" y="231.2" width="26" height="7.6" fill="#7d7d7d"/>
<text x="263.8" y="238.56" font-size="9.6" fill="#3cd04c" textLength="16.6" lengthAdjust="spacingAndGlyphs" font-weight="bold" text-anchor="end">23.5</text>
<text x="264.6" y="238.1" font-size="8.6" fill="#e6e6e6" textLength="7.6" lengthAdjust="spacingAndGlyphs">℃</text>
<text x="192" y="249.63" font-size="8" fill="#fff" textLength="34.5" lengthAdjust="spacingAndGlyphs">給気露点SP</text>
<rect x="238" y="242.95" width="26" height="7.6" fill="#7d7d7d"/>
<text x="263.8" y="250.31" font-size="9.6" fill="#5ad6da" textLength="16.6" lengthAdjust="spacingAndGlyphs" font-weight="bold" text-anchor="end">14.5</text>
<text x="264.6" y="249.85" font-size="8.6" fill="#e6e6e6" textLength="7.6" lengthAdjust="spacingAndGlyphs">℃</text>
<text x="271.9" y="249.99" font-size="9" fill="#fff" textLength="8.4" lengthAdjust="spacingAndGlyphs">DP</text>
<text x="192" y="260.28" font-size="8" fill="#fff" textLength="34.5" lengthAdjust="spacingAndGlyphs">給気露点SP</text>
<text x="191" y="267.88" font-size="8" fill="#fff" textLength="20.7" lengthAdjust="spacingAndGlyphs">(自動)</text>
<path d="M232 260.7l2-3.300l2 3.300zM232 264.7l2-3.300l2 3.300z" fill="#b4aecd"/>
<rect x="238" y="257.2" width="26" height="7.6" fill="#7d7d7d"/>
<text x="263.8" y="264.56" font-size="9.6" fill="#3cd04c" textLength="16.6" lengthAdjust="spacingAndGlyphs" font-weight="bold" text-anchor="end">14.5</text>
<text x="264.6" y="264.1" font-size="8.6" fill="#e6e6e6" textLength="7.6" lengthAdjust="spacingAndGlyphs">℃</text>
<text x="271.9" y="264.24" font-size="9" fill="#fff" textLength="8.4" lengthAdjust="spacingAndGlyphs">DP</text>
<text x="192" y="278.13" font-size="8" fill="#fff" textLength="27.6" lengthAdjust="spacingAndGlyphs">給気露点</text>
<path d="M232 274.95l2-3.300l2 3.300zM232 278.95l2-3.300l2 3.300z" fill="#b4aecd"/>
<rect x="238" y="271.45" width="26" height="7.6" fill="#7d7d7d"/>
<text x="263.8" y="278.81" font-size="9.6" fill="#3cd04c" textLength="16.6" lengthAdjust="spacingAndGlyphs" font-weight="bold" text-anchor="end">10.8</text>
<text x="264.6" y="278.35" font-size="8.6" fill="#e6e6e6" textLength="7.6" lengthAdjust="spacingAndGlyphs">℃</text>
<text x="271.9" y="278.49" font-size="9" fill="#fff" textLength="8.4" lengthAdjust="spacingAndGlyphs">DP</text>
<text x="192" y="289.88" font-size="8" fill="#fff" textLength="27.6" lengthAdjust="spacingAndGlyphs">給気風量</text>
<path d="M232 286.7l2-3.300l2 3.300zM232 290.7l2-3.300l2 3.300z" fill="#b4aecd"/>
<rect x="238" y="283.2" width="26" height="7.6" fill="#7d7d7d"/>
<text x="263.8" y="290.56" font-size="9.6" fill="#3cd04c" textLength="20.75" lengthAdjust="spacingAndGlyphs" font-weight="bold" text-anchor="end">39900</text>
<text x="264.8" y="290.24" font-size="9" fill="#fff" textLength="16.8" lengthAdjust="spacingAndGlyphs">m3/h</text>
<text x="191" y="305.74" font-size="9" fill="#fff" textLength="12.08" lengthAdjust="spacingAndGlyphs">SA2</text>
<path d="M190.3 307.5H283V400H190.3ZM190.3 319H283M190.3 336H283M190.3 348H283M190.3 359.5H283M190.3 376.5H283M190.3 388H283M228 307.5V400" fill="none" stroke="#c9c9c9" stroke-width="1"/>
<text x="192" y="316.13" font-size="8" fill="#fff" textLength="34.5" lengthAdjust="spacingAndGlyphs">給気温度SP</text>
<rect x="238" y="309.45" width="26" height="7.6" fill="#7d7d7d"/>
<text x="263.8" y="316.81" font-size="9.6" fill="#5ad6da" textLength="16.6" lengthAdjust="spacingAndGlyphs" font-weight="bold" text-anchor="end">26.0</text>
<text x="264.6" y="316.35" font-size="8.6" fill="#e6e6e6" textLength="7.6" lengthAdjust="spacingAndGlyphs">℃</text>
<text x="192" y="326.78" font-size="8" fill="#fff" textLength="34.5" lengthAdjust="spacingAndGlyphs">給気温度SP</text>
<text x="191" y="334.38" font-size="8" fill="#fff" textLength="20.7" lengthAdjust="spacingAndGlyphs">(自動)</text>
<path d="M232 327.2l2-3.300l2 3.300zM232 331.2l2-3.300l2 3.300z" fill="#b4aecd"/>
<rect x="238" y="323.7" width="26" height="7.6" fill="#7d7d7d"/>
<text x="263.8" y="331.06" font-size="9.6" fill="#3cd04c" textLength="16.6" lengthAdjust="spacingAndGlyphs" font-weight="bold" text-anchor="end">26.0</text>
<text x="264.6" y="330.6" font-size="8.6" fill="#e6e6e6" textLength="7.6" lengthAdjust="spacingAndGlyphs">℃</text>
<text x="192" y="344.88" font-size="8" fill="#fff" textLength="27.6" lengthAdjust="spacingAndGlyphs">給気温度</text>
<path d="M232 341.7l2-3.300l2 3.300zM232 345.7l2-3.300l2 3.300z" fill="#b4aecd"/>
<rect x="238" y="338.2" width="26" height="7.6" fill="#7d7d7d"/>
<text x="263.8" y="345.56" font-size="9.6" fill="#3cd04c" textLength="16.6" lengthAdjust="spacingAndGlyphs" font-weight="bold" text-anchor="end">23.9</text>
<text x="264.6" y="345.1" font-size="8.6" fill="#e6e6e6" textLength="7.6" lengthAdjust="spacingAndGlyphs">℃</text>
<text x="192" y="356.63" font-size="8" fill="#fff" textLength="34.5" lengthAdjust="spacingAndGlyphs">給気露点SP</text>
<rect x="238" y="349.95" width="26" height="7.6" fill="#7d7d7d"/>
<text x="263.8" y="357.31" font-size="9.6" fill="#5ad6da" textLength="16.6" lengthAdjust="spacingAndGlyphs" font-weight="bold" text-anchor="end">14.5</text>
<text x="264.6" y="356.85" font-size="8.6" fill="#e6e6e6" textLength="7.6" lengthAdjust="spacingAndGlyphs">℃</text>
<text x="271.9" y="356.99" font-size="9" fill="#fff" textLength="8.4" lengthAdjust="spacingAndGlyphs">DP</text>
<text x="192" y="367.28" font-size="8" fill="#fff" textLength="34.5" lengthAdjust="spacingAndGlyphs">給気露点SP</text>
<text x="191" y="374.88" font-size="8" fill="#fff" textLength="20.7" lengthAdjust="spacingAndGlyphs">(自動)</text>
<path d="M232 367.7l2-3.300l2 3.300zM232 371.7l2-3.300l2 3.300z" fill="#b4aecd"/>
<rect x="238" y="364.2" width="26" height="7.6" fill="#7d7d7d"/>
<text x="263.8" y="371.56" font-size="9.6" fill="#3cd04c" textLength="16.6" lengthAdjust="spacingAndGlyphs" font-weight="bold" text-anchor="end">14.5</text>
<text x="264.6" y="371.1" font-size="8.6" fill="#e6e6e6" textLength="7.6" lengthAdjust="spacingAndGlyphs">℃</text>
<text x="271.9" y="371.24" font-size="9" fill="#fff" textLength="8.4" lengthAdjust="spacingAndGlyphs">DP</text>
<text x="192" y="385.13" font-size="8" fill="#fff" textLength="27.6" lengthAdjust="spacingAndGlyphs">給気露点</text>
<path d="M232 381.95l2-3.300l2 3.300zM232 385.95l2-3.300l2 3.300z" fill="#b4aecd"/>
<rect x="238" y="378.45" width="26" height="7.6" fill="#7d7d7d"/>
<text x="263.8" y="385.81" font-size="9.6" fill="#3cd04c" textLength="12.45" lengthAdjust="spacingAndGlyphs" font-weight="bold" text-anchor="end">9.7</text>
<text x="264.6" y="385.35" font-size="8.6" fill="#e6e6e6" textLength="7.6" lengthAdjust="spacingAndGlyphs">℃</text>
<text x="271.9" y="385.49" font-size="9" fill="#fff" textLength="8.4" lengthAdjust="spacingAndGlyphs">DP</text>
<text x="192" y="396.88" font-size="8" fill="#fff" textLength="27.6" lengthAdjust="spacingAndGlyphs">給気風量</text>
<path d="M232 393.7l2-3.300l2 3.300zM232 397.7l2-3.300l2 3.300z" fill="#b4aecd"/>
<rect x="238" y="390.2" width="26" height="7.6" fill="#7d7d7d"/>
<text x="263.8" y="397.56" font-size="9.6" fill="#3cd04c" textLength="20.75" lengthAdjust="spacingAndGlyphs" font-weight="bold" text-anchor="end">14538</text>
<text x="264.8" y="397.24" font-size="9" fill="#fff" textLength="16.8" lengthAdjust="spacingAndGlyphs">m3/h</text>
<text x="191" y="415.54" font-size="9" fill="#fff" textLength="8.05" lengthAdjust="spacingAndGlyphs">RA</text>
<path d="M190.3 417H283V499.04H190.3ZM190.3 428.72H283M190.3 440.44H283M190.3 452.16H283M190.3 463.88H283M190.3 475.6H283M190.3 487.32H283M228 417V499.04" fill="none" stroke="#c9c9c9" stroke-width="1"/>
<text x="192" y="425.74" font-size="8" fill="#fff" textLength="27.6" lengthAdjust="spacingAndGlyphs">還気温度</text>
<path d="M232 422.56l2-3.300l2 3.300zM232 426.56l2-3.300l2 3.300z" fill="#b4aecd"/>
<rect x="238" y="419.06" width="26" height="7.6" fill="#7d7d7d"/>
<text x="263.8" y="426.42" font-size="9.6" fill="#3cd04c" textLength="16.6" lengthAdjust="spacingAndGlyphs" font-weight="bold" text-anchor="end">24.5</text>
<text x="264.6" y="425.96" font-size="8.6" fill="#e6e6e6" textLength="7.6" lengthAdjust="spacingAndGlyphs">℃</text>
<text x="192" y="437.46" font-size="8" fill="#fff" textLength="27.6" lengthAdjust="spacingAndGlyphs">還気露点</text>
<path d="M232 434.28l2-3.300l2 3.300zM232 438.28l2-3.300l2 3.300z" fill="#b4aecd"/>
<rect x="238" y="430.78" width="26" height="7.6" fill="#7d7d7d"/>
<text x="263.8" y="438.14" font-size="9.6" fill="#3cd04c" textLength="16.6" lengthAdjust="spacingAndGlyphs" font-weight="bold" text-anchor="end">11.4</text>
<text x="264.6" y="437.68" font-size="8.6" fill="#e6e6e6" textLength="7.6" lengthAdjust="spacingAndGlyphs">℃</text>
<text x="271.9" y="437.82" font-size="9" fill="#fff" textLength="8.4" lengthAdjust="spacingAndGlyphs">DP</text>
<text x="192" y="449.18" font-size="8" fill="#fff" textLength="20.7" lengthAdjust="spacingAndGlyphs">CO2 SP</text>
<rect x="238" y="442.5" width="26" height="7.6" fill="#7d7d7d"/>
<text x="263.8" y="449.86" font-size="9.6" fill="#5ad6da" textLength="12.45" lengthAdjust="spacingAndGlyphs" font-weight="bold" text-anchor="end">800</text>
<text x="264.8" y="449.54" font-size="9" fill="#fff" textLength="12.6" lengthAdjust="spacingAndGlyphs">ppm</text>
<text x="192" y="460.9" font-size="8" fill="#fff" textLength="10.35" lengthAdjust="spacingAndGlyphs">CO2</text>
<path d="M232 457.72l2-3.300l2 3.300zM232 461.72l2-3.300l2 3.300z" fill="#b4aecd"/>
<rect x="238" y="454.22" width="26" height="7.6" fill="#7d7d7d"/>
<text x="263.8" y="461.58" font-size="9.6" fill="#3cd04c" textLength="12.45" lengthAdjust="spacingAndGlyphs" font-weight="bold" text-anchor="end">861</text>
<text x="264.8" y="461.26" font-size="9" fill="#fff" textLength="12.6" lengthAdjust="spacingAndGlyphs">ppm</text>
<text x="192" y="472.62" font-size="8" fill="#fff" textLength="24.15" lengthAdjust="spacingAndGlyphs">TVOC SP</text>
<rect x="238" y="465.94" width="26" height="7.6" fill="#7d7d7d"/>
<text x="263.8" y="473.3" font-size="9.6" fill="#5ad6da" textLength="16.6" lengthAdjust="spacingAndGlyphs" font-weight="bold" text-anchor="end">10.0</text>
<text x="264.8" y="472.98" font-size="9" fill="#fff" textLength="4.2" lengthAdjust="spacingAndGlyphs">V</text>
<text x="192" y="484.34" font-size="8" fill="#fff" textLength="13.8" lengthAdjust="spacingAndGlyphs">TVOC</text>
<path d="M232 481.16l2-3.300l2 3.300zM232 485.16l2-3.300l2 3.300z" fill="#b4aecd"/>
<rect x="238" y="477.66" width="26" height="7.6" fill="#7d7d7d"/>
<text x="263.8" y="485.02" font-size="9.6" fill="#3cd04c" textLength="12.45" lengthAdjust="spacingAndGlyphs" font-weight="bold" text-anchor="end">3.3</text>
<text x="264.8" y="484.7" font-size="9" fill="#fff" textLength="4.2" lengthAdjust="spacingAndGlyphs">V</text>
<text x="192" y="496.06" font-size="8" fill="#fff" textLength="27.6" lengthAdjust="spacingAndGlyphs">還気風量</text>
<path d="M232 492.88l2-3.300l2 3.300zM232 496.88l2-3.300l2 3.300z" fill="#b4aecd"/>
<rect x="238" y="489.38" width="26" height="7.6" fill="#7d7d7d"/>
<text x="263.8" y="496.74" font-size="9.6" fill="#3cd04c" textLength="20.75" lengthAdjust="spacingAndGlyphs" font-weight="bold" text-anchor="end">35788</text>
<text x="264.8" y="496.42" font-size="9" fill="#fff" textLength="16.8" lengthAdjust="spacingAndGlyphs">m3/h</text>
<path d="M286.5 169H441V181H286.5ZM394.3 169V181" fill="none" stroke="#c9c9c9" stroke-width="1"/>
<text x="288.5" y="178.24" font-size="9" fill="#fff" textLength="100" lengthAdjust="spacingAndGlyphs">給気・排気ﾌｧﾝ・ﾛｰﾀｰ電力量</text>
<rect x="400" y="171.2" width="26.3" height="7.6" fill="#7d7d7d"/>
<text x="426.1" y="178.56" font-size="9.6" fill="#3cd04c" textLength="12.45" lengthAdjust="spacingAndGlyphs" font-weight="bold" text-anchor="end">124</text>
<text x="427.1" y="178.1" font-size="8.6" fill="#fff" textLength="13.2" lengthAdjust="spacingAndGlyphs">kWh</text>
<path d="M336 184H441V195.6H336ZM406 184V195.6" fill="none" stroke="#c9c9c9" stroke-width="1"/>
<text x="338" y="193.04" font-size="9" fill="#fff" textLength="60" lengthAdjust="spacingAndGlyphs">給気ﾌｧﾝﾊﾞｰｽ運転</text>
<rect x="420.400" y="186.600" width="6" height="6.800" fill="#86b4c2"/>
<path d="M365.6 198.6H441V233.1H365.6ZM365.6 210.1H441M365.6 221.6H441M406 198.6V233.1" fill="none" stroke="#c9c9c9" stroke-width="1"/>
<text x="367" y="207.59" font-size="9" fill="#fff" textLength="36.68" lengthAdjust="spacingAndGlyphs">SA1-1 INV</text>
<path d="M408.7 204.05l2-3.300l2 3.300zM408.7 208.05l2-3.300l2 3.300z" fill="#b4aecd"/>
<rect x="415" y="200.55" width="13.4" height="7.6" fill="#7d7d7d"/>
<text x="428.2" y="207.91" font-size="9.6" fill="#3cd04c" textLength="8.3" lengthAdjust="spacingAndGlyphs" font-weight="bold" text-anchor="end">89</text>
<text x="429.2" y="207.81" font-size="9.6" fill="#fff" textLength="4.5" lengthAdjust="spacingAndGlyphs">%</text>
<text x="367" y="219.09" font-size="9" fill="#fff" textLength="36.68" lengthAdjust="spacingAndGlyphs">SA1-2 INV</text>
<path d="M408.7 215.55l2-3.300l2 3.300zM408.7 219.55l2-3.300l2 3.300z" fill="#b4aecd"/>
<rect x="415" y="212.05" width="13.4" height="7.6" fill="#7d7d7d"/>
<text x="428.2" y="219.41" font-size="9.6" fill="#3cd04c" textLength="8.3" lengthAdjust="spacingAndGlyphs" font-weight="bold" text-anchor="end">89</text>
<text x="429.2" y="219.31" font-size="9.6" fill="#fff" textLength="4.5" lengthAdjust="spacingAndGlyphs">%</text>
<text x="367" y="230.59" font-size="9" fill="#fff" textLength="36.68" lengthAdjust="spacingAndGlyphs">SA2   INV</text>
<path d="M408.7 227.05l2-3.300l2 3.300zM408.7 231.05l2-3.300l2 3.300z" fill="#b4aecd"/>
<rect x="415" y="223.55" width="13.4" height="7.6" fill="#7d7d7d"/>
<text x="428.2" y="230.91" font-size="9.6" fill="#3cd04c" textLength="8.3" lengthAdjust="spacingAndGlyphs" font-weight="bold" text-anchor="end">89</text>
<text x="429.2" y="230.81" font-size="9.6" fill="#fff" textLength="4.5" lengthAdjust="spacingAndGlyphs">%</text>
<rect x="323" y="107" width="7" height="6" fill="#e08010"/><rect x="324.2" y="108" width="4.600" height="3.500" fill="#ffb040"/>
<text x="333" y="113.24" font-size="9" fill="#fff" textLength="52" lengthAdjust="spacingAndGlyphs">ﾀﾞﾝﾊﾟ異常ﾘｾｯﾄ</text>
<path d="M323.500 122.500l7-3.800v7.600z" fill="#fff"/>
<text x="333" y="125.74" font-size="9" fill="#555" textLength="36" lengthAdjust="spacingAndGlyphs">ﾀﾞﾝﾊﾟ異常</text>
<path d="M336.5 466.7H441.5V478.4H336.5ZM394.3 466.7V478.4" fill="none" stroke="#c9c9c9" stroke-width="1"/>
<text x="338.5" y="475.84" font-size="9" fill="#fff" textLength="52.33" lengthAdjust="spacingAndGlyphs">還気ﾌｧﾝ電力量</text>
<rect x="400.3" y="468.8" width="25.7" height="7.6" fill="#7d7d7d"/>
<text x="425.8" y="476.16" font-size="9.6" fill="#3cd04c" textLength="8.3" lengthAdjust="spacingAndGlyphs" font-weight="bold" text-anchor="end">49</text>
<text x="426.8" y="475.7" font-size="8.6" fill="#fff" textLength="13.2" lengthAdjust="spacingAndGlyphs">kWh</text>
<path d="M756.5 459.4H821V482.6H756.5ZM756.5 471H821M789.5 459.4V482.6" fill="none" stroke="#c9c9c9" stroke-width="1"/>
<text x="758.5" y="468.44" font-size="9" fill="#fff" textLength="28" lengthAdjust="spacingAndGlyphs">EA1 INV</text>
<path d="M793.5 464.9l2-3.300l2 3.300zM793.5 468.9l2-3.300l2 3.300z" fill="#b4aecd"/>
<rect x="799.5" y="461.4" width="12" height="7.6" fill="#7d7d7d"/>
<text x="811.3" y="468.76" font-size="9.6" fill="#3cd04c" textLength="4.15" lengthAdjust="spacingAndGlyphs" font-weight="bold" text-anchor="end">0</text>
<text x="812.3" y="468.44" font-size="9" fill="#fff" textLength="4" lengthAdjust="spacingAndGlyphs">%</text>
<text x="758.5" y="480.04" font-size="9" fill="#fff" textLength="28" lengthAdjust="spacingAndGlyphs">EA2 INV</text>
<path d="M793.5 476.5l2-3.300l2 3.300zM793.5 480.5l2-3.300l2 3.300z" fill="#b4aecd"/>
<rect x="799.5" y="473" width="12" height="7.6" fill="#7d7d7d"/>
<text x="811.3" y="480.36" font-size="9.6" fill="#3cd04c" textLength="4.15" lengthAdjust="spacingAndGlyphs" font-weight="bold" text-anchor="end">0</text>
<text x="812.3" y="480.04" font-size="9" fill="#fff" textLength="4" lengthAdjust="spacingAndGlyphs">%</text>
<path d="M555.3 134.1H884.4V212.22H555.3ZM555.3 145.26H884.4M555.3 156.42H884.4M555.3 167.58H884.4M555.3 178.74H884.4M555.3 189.9H884.4M555.3 201.06H884.4M601.8 134.1V212.22M639.1 134.1V212.22M676.4 134.1V212.22M706.3 134.1V212.22M759.9 134.1V212.22M800.6 134.1V212.22M845.4 134.1V212.22" fill="none" stroke="#c9c9c9" stroke-width="1"/>
<text x="608.75" y="142.92" font-size="9" fill="#fff" textLength="23.4" lengthAdjust="spacingAndGlyphs">往温度</text>
<text x="646.05" y="142.92" font-size="9" fill="#fff" textLength="23.4" lengthAdjust="spacingAndGlyphs">還温度</text>
<text x="679.65" y="142.92" font-size="9" fill="#fff" textLength="23.4" lengthAdjust="spacingAndGlyphs">弁開度</text>
<text x="717.5" y="142.92" font-size="9" fill="#fff" textLength="31.2" lengthAdjust="spacingAndGlyphs">瞬時熱量</text>
<text x="764.65" y="142.92" font-size="9" fill="#fff" textLength="31.2" lengthAdjust="spacingAndGlyphs">積算熱量</text>
<text x="807.4" y="142.92" font-size="9" fill="#fff" textLength="31.2" lengthAdjust="spacingAndGlyphs">瞬時流量</text>
<text x="849.3" y="142.92" font-size="9" fill="#fff" textLength="31.2" lengthAdjust="spacingAndGlyphs">積算流量</text>
<text x="557.5" y="154.08" font-size="9" fill="#fff" textLength="40.5" lengthAdjust="spacingAndGlyphs">温水ｺｲﾙ1-1</text>
<path d="M603.7 150.54l2-3.300l2 3.300zM603.7 154.54l2-3.300l2 3.300z" fill="#b4aecd"/>
<rect x="609.6" y="147.04" width="17.9" height="7.6" fill="#7d7d7d"/>
<text x="627.3" y="154.4" font-size="9.6" fill="#3cd04c" textLength="16.6" lengthAdjust="spacingAndGlyphs" font-weight="bold" text-anchor="end">21.2</text>
<text x="628.1" y="153.94" font-size="8.6" fill="#e6e6e6" textLength="7.6" lengthAdjust="spacingAndGlyphs">℃</text>
<path d="M641 150.54l2-3.300l2 3.300zM641 154.54l2-3.300l2 3.300z" fill="#b4aecd"/>
<rect x="646.9" y="147.04" width="18" height="7.6" fill="#7d7d7d"/>
<text x="664.7" y="154.4" font-size="9.6" fill="#3cd04c" textLength="16.6" lengthAdjust="spacingAndGlyphs" font-weight="bold" text-anchor="end">20.7</text>
<text x="665.5" y="153.94" font-size="8.6" fill="#e6e6e6" textLength="7.6" lengthAdjust="spacingAndGlyphs">℃</text>
<path d="M678.3 150.54l2-3.300l2 3.300zM678.3 154.54l2-3.300l2 3.300z" fill="#b4aecd"/>
<rect x="684.2" y="147.04" width="12.6" height="7.6" fill="#7d7d7d"/>
<text x="696.6" y="154.4" font-size="9.6" fill="#3cd04c" textLength="12.45" lengthAdjust="spacingAndGlyphs" font-weight="bold" text-anchor="end">100</text>
<text x="697.6" y="154.08" font-size="9" fill="#fff" textLength="4" lengthAdjust="spacingAndGlyphs">%</text>
<path d="M708.5 150.54l2-3.300l2 3.300zM708.5 154.54l2-3.300l2 3.300z" fill="#b4aecd"/>
<rect x="714.8" y="147.04" width="25.4" height="7.6" fill="#7d7d7d"/>
<text x="740" y="154.4" font-size="9.6" fill="#3cd04c" textLength="4.15" lengthAdjust="spacingAndGlyphs" font-weight="bold" text-anchor="end">0</text>
<text x="741" y="154.08" font-size="9" fill="#fff" textLength="16.4" lengthAdjust="spacingAndGlyphs">MJ/h</text>
<rect x="762.3" y="147.04" width="26.1" height="7.6" fill="#7d7d7d"/>
<text x="788.2" y="154.4" font-size="9.6" fill="#3cd04c" textLength="4.15" lengthAdjust="spacingAndGlyphs" font-weight="bold" text-anchor="end">0</text>
<text x="789.2" y="154.08" font-size="9" fill="#fff" textLength="8.2" lengthAdjust="spacingAndGlyphs">MJ</text>
<path d="M802 150.54l2-3.300l2 3.300zM802 154.54l2-3.300l2 3.300z" fill="#b4aecd"/>
<rect x="808" y="147.04" width="17" height="7.6" fill="#7d7d7d"/>
<text x="824.8" y="154.4" font-size="9.6" fill="#3cd04c" textLength="4.15" lengthAdjust="spacingAndGlyphs" font-weight="bold" text-anchor="end">0</text>
<text x="825.8" y="154.08" font-size="9" fill="#fff" textLength="16.8" lengthAdjust="spacingAndGlyphs">m3/h</text>
<rect x="847" y="147.04" width="27.2" height="7.6" fill="#7d7d7d"/>
<text x="874" y="154.4" font-size="9.6" fill="#3cd04c" textLength="4.15" lengthAdjust="spacingAndGlyphs" font-weight="bold" text-anchor="end">0</text>
<text x="875" y="154.08" font-size="9" fill="#fff" textLength="8.4" lengthAdjust="spacingAndGlyphs">m3</text>
<text x="557.5" y="165.24" font-size="9" fill="#fff" textLength="40.5" lengthAdjust="spacingAndGlyphs">温水ｺｲﾙ1-2</text>
<path d="M603.7 161.7l2-3.300l2 3.300zM603.7 165.7l2-3.300l2 3.300z" fill="#b4aecd"/>
<rect x="609.6" y="158.2" width="17.9" height="7.6" fill="#7d7d7d"/>
<text x="627.3" y="165.56" font-size="9.6" fill="#3cd04c" textLength="16.6" lengthAdjust="spacingAndGlyphs" font-weight="bold" text-anchor="end">20.8</text>
<text x="628.1" y="165.1" font-size="8.6" fill="#e6e6e6" textLength="7.6" lengthAdjust="spacingAndGlyphs">℃</text>
<path d="M641 161.7l2-3.300l2 3.300zM641 165.7l2-3.300l2 3.300z" fill="#b4aecd"/>
<rect x="646.9" y="158.2" width="18" height="7.6" fill="#7d7d7d"/>
<text x="664.7" y="165.56" font-size="9.6" fill="#3cd04c" textLength="16.6" lengthAdjust="spacingAndGlyphs" font-weight="bold" text-anchor="end">21.0</text>
<text x="665.5" y="165.1" font-size="8.6" fill="#e6e6e6" textLength="7.6" lengthAdjust="spacingAndGlyphs">℃</text>
<path d="M678.3 161.7l2-3.300l2 3.300zM678.3 165.7l2-3.300l2 3.300z" fill="#b4aecd"/>
<rect x="684.2" y="158.2" width="12.6" height="7.6" fill="#7d7d7d"/>
<text x="696.6" y="165.56" font-size="9.6" fill="#3cd04c" textLength="12.45" lengthAdjust="spacingAndGlyphs" font-weight="bold" text-anchor="end">100</text>
<text x="697.6" y="165.24" font-size="9" fill="#fff" textLength="4" lengthAdjust="spacingAndGlyphs">%</text>
<path d="M708.5 161.7l2-3.300l2 3.300zM708.5 165.7l2-3.300l2 3.300z" fill="#b4aecd"/>
<rect x="714.8" y="158.2" width="25.4" height="7.6" fill="#7d7d7d"/>
<text x="740" y="165.56" font-size="9.6" fill="#3cd04c" textLength="4.15" lengthAdjust="spacingAndGlyphs" font-weight="bold" text-anchor="end">0</text>
<text x="741" y="165.24" font-size="9" fill="#fff" textLength="16.4" lengthAdjust="spacingAndGlyphs">MJ/h</text>
<rect x="762.3" y="158.2" width="26.1" height="7.6" fill="#7d7d7d"/>
<text x="788.2" y="165.56" font-size="9.6" fill="#3cd04c" textLength="4.15" lengthAdjust="spacingAndGlyphs" font-weight="bold" text-anchor="end">0</text>
<text x="789.2" y="165.24" font-size="9" fill="#fff" textLength="8.2" lengthAdjust="spacingAndGlyphs">MJ</text>
<path d="M802 161.7l2-3.300l2 3.300zM802 165.7l2-3.300l2 3.300z" fill="#b4aecd"/>
<rect x="808" y="158.2" width="17" height="7.6" fill="#7d7d7d"/>
<text x="824.8" y="165.56" font-size="9.6" fill="#3cd04c" textLength="4.15" lengthAdjust="spacingAndGlyphs" font-weight="bold" text-anchor="end">0</text>
<text x="825.8" y="165.24" font-size="9" fill="#fff" textLength="16.8" lengthAdjust="spacingAndGlyphs">m3/h</text>
<rect x="847" y="158.2" width="27.2" height="7.6" fill="#7d7d7d"/>
<text x="874" y="165.56" font-size="9.6" fill="#3cd04c" textLength="4.15" lengthAdjust="spacingAndGlyphs" font-weight="bold" text-anchor="end">0</text>
<text x="875" y="165.24" font-size="9" fill="#fff" textLength="8.4" lengthAdjust="spacingAndGlyphs">m3</text>
<text x="557.5" y="176.4" font-size="9" fill="#fff" textLength="32.4" lengthAdjust="spacingAndGlyphs">温水ｺｲﾙ2</text>
<path d="M603.7 172.86l2-3.300l2 3.300zM603.7 176.86l2-3.300l2 3.300z" fill="#b4aecd"/>
<rect x="609.6" y="169.36" width="17.9" height="7.6" fill="#7d7d7d"/>
<text x="627.3" y="176.72" font-size="9.6" fill="#3cd04c" textLength="16.6" lengthAdjust="spacingAndGlyphs" font-weight="bold" text-anchor="end">20.4</text>
<text x="628.1" y="176.26" font-size="8.6" fill="#e6e6e6" textLength="7.6" lengthAdjust="spacingAndGlyphs">℃</text>
<path d="M641 172.86l2-3.300l2 3.300zM641 176.86l2-3.300l2 3.300z" fill="#b4aecd"/>
<rect x="646.9" y="169.36" width="18" height="7.6" fill="#7d7d7d"/>
<text x="664.7" y="176.72" font-size="9.6" fill="#3cd04c" textLength="16.6" lengthAdjust="spacingAndGlyphs" font-weight="bold" text-anchor="end">21.8</text>
<text x="665.5" y="176.26" font-size="8.6" fill="#e6e6e6" textLength="7.6" lengthAdjust="spacingAndGlyphs">℃</text>
<path d="M678.3 172.86l2-3.300l2 3.300zM678.3 176.86l2-3.300l2 3.300z" fill="#b4aecd"/>
<rect x="684.2" y="169.36" width="12.6" height="7.6" fill="#7d7d7d"/>
<text x="696.6" y="176.72" font-size="9.6" fill="#3cd04c" textLength="12.45" lengthAdjust="spacingAndGlyphs" font-weight="bold" text-anchor="end">100</text>
<text x="697.6" y="176.4" font-size="9" fill="#fff" textLength="4" lengthAdjust="spacingAndGlyphs">%</text>
<path d="M708.5 172.86l2-3.300l2 3.300zM708.5 176.86l2-3.300l2 3.300z" fill="#b4aecd"/>
<rect x="714.8" y="169.36" width="25.4" height="7.6" fill="#7d7d7d"/>
<text x="740" y="176.72" font-size="9.6" fill="#3cd04c" textLength="4.15" lengthAdjust="spacingAndGlyphs" font-weight="bold" text-anchor="end">0</text>
<text x="741" y="176.4" font-size="9" fill="#fff" textLength="16.4" lengthAdjust="spacingAndGlyphs">MJ/h</text>
<rect x="762.3" y="169.36" width="26.1" height="7.6" fill="#7d7d7d"/>
<text x="788.2" y="176.72" font-size="9.6" fill="#3cd04c" textLength="4.15" lengthAdjust="spacingAndGlyphs" font-weight="bold" text-anchor="end">0</text>
<text x="789.2" y="176.4" font-size="9" fill="#fff" textLength="8.2" lengthAdjust="spacingAndGlyphs">MJ</text>
<path d="M802 172.86l2-3.300l2 3.300zM802 176.86l2-3.300l2 3.300z" fill="#b4aecd"/>
<rect x="808" y="169.36" width="17" height="7.6" fill="#7d7d7d"/>
<text x="824.8" y="176.72" font-size="9.6" fill="#3cd04c" textLength="4.15" lengthAdjust="spacingAndGlyphs" font-weight="bold" text-anchor="end">0</text>
<text x="825.8" y="176.4" font-size="9" fill="#fff" textLength="16.8" lengthAdjust="spacingAndGlyphs">m3/h</text>
<rect x="847" y="169.36" width="27.2" height="7.6" fill="#7d7d7d"/>
<text x="874" y="176.72" font-size="9.6" fill="#3cd04c" textLength="4.15" lengthAdjust="spacingAndGlyphs" font-weight="bold" text-anchor="end">0</text>
<text x="875" y="176.4" font-size="9" fill="#fff" textLength="8.4" lengthAdjust="spacingAndGlyphs">m3</text>
<text x="557.5" y="187.56" font-size="9" fill="#fff" textLength="40.5" lengthAdjust="spacingAndGlyphs">冷水ｺｲﾙ1-1</text>
<path d="M603.7 184.02l2-3.300l2 3.300zM603.7 188.02l2-3.300l2 3.300z" fill="#b4aecd"/>
<rect x="609.6" y="180.52" width="17.9" height="7.6" fill="#7d7d7d"/>
<text x="627.3" y="187.88" font-size="9.6" fill="#3cd04c" textLength="16.6" lengthAdjust="spacingAndGlyphs" font-weight="bold" text-anchor="end">19.9</text>
<text x="628.1" y="187.42" font-size="8.6" fill="#e6e6e6" textLength="7.6" lengthAdjust="spacingAndGlyphs">℃</text>
<path d="M641 184.02l2-3.300l2 3.300zM641 188.02l2-3.300l2 3.300z" fill="#b4aecd"/>
<rect x="646.9" y="180.52" width="18" height="7.6" fill="#7d7d7d"/>
<text x="664.7" y="187.88" font-size="9.6" fill="#3cd04c" textLength="16.6" lengthAdjust="spacingAndGlyphs" font-weight="bold" text-anchor="end">19.8</text>
<text x="665.5" y="187.42" font-size="8.6" fill="#e6e6e6" textLength="7.6" lengthAdjust="spacingAndGlyphs">℃</text>
<path d="M678.3 184.02l2-3.300l2 3.300zM678.3 188.02l2-3.300l2 3.300z" fill="#b4aecd"/>
<rect x="684.2" y="180.52" width="12.6" height="7.6" fill="#7d7d7d"/>
<text x="696.6" y="187.88" font-size="9.6" fill="#3cd04c" textLength="4.15" lengthAdjust="spacingAndGlyphs" font-weight="bold" text-anchor="end">0</text>
<text x="697.6" y="187.56" font-size="9" fill="#fff" textLength="4" lengthAdjust="spacingAndGlyphs">%</text>
<path d="M708.5 184.02l2-3.300l2 3.300zM708.5 188.02l2-3.300l2 3.300z" fill="#b4aecd"/>
<rect x="714.8" y="180.52" width="25.4" height="7.6" fill="#7d7d7d"/>
<text x="740" y="187.88" font-size="9.6" fill="#3cd04c" textLength="4.15" lengthAdjust="spacingAndGlyphs" font-weight="bold" text-anchor="end">0</text>
<text x="741" y="187.56" font-size="9" fill="#fff" textLength="16.4" lengthAdjust="spacingAndGlyphs">MJ/h</text>
<rect x="762.3" y="180.52" width="26.1" height="7.6" fill="#7d7d7d"/>
<text x="788.2" y="187.88" font-size="9.6" fill="#3cd04c" textLength="4.15" lengthAdjust="spacingAndGlyphs" font-weight="bold" text-anchor="end">0</text>
<text x="789.2" y="187.56" font-size="9" fill="#fff" textLength="8.2" lengthAdjust="spacingAndGlyphs">MJ</text>
<path d="M802 184.02l2-3.300l2 3.300zM802 188.02l2-3.300l2 3.300z" fill="#b4aecd"/>
<rect x="808" y="180.52" width="17" height="7.6" fill="#7d7d7d"/>
<text x="824.8" y="187.88" font-size="9.6" fill="#3cd04c" textLength="4.15" lengthAdjust="spacingAndGlyphs" font-weight="bold" text-anchor="end">0</text>
<text x="825.8" y="187.56" font-size="9" fill="#fff" textLength="16.8" lengthAdjust="spacingAndGlyphs">m3/h</text>
<rect x="847" y="180.52" width="27.2" height="7.6" fill="#7d7d7d"/>
<text x="874" y="187.88" font-size="9.6" fill="#3cd04c" textLength="4.15" lengthAdjust="spacingAndGlyphs" font-weight="bold" text-anchor="end">0</text>
<text x="875" y="187.56" font-size="9" fill="#fff" textLength="8.4" lengthAdjust="spacingAndGlyphs">m3</text>
<text x="557.5" y="198.72" font-size="9" fill="#fff" textLength="40.5" lengthAdjust="spacingAndGlyphs">冷水ｺｲﾙ1-2</text>
<path d="M603.7 195.18l2-3.300l2 3.300zM603.7 199.18l2-3.300l2 3.300z" fill="#b4aecd"/>
<rect x="609.6" y="191.68" width="17.9" height="7.6" fill="#7d7d7d"/>
<text x="627.3" y="199.04" font-size="9.6" fill="#3cd04c" textLength="16.6" lengthAdjust="spacingAndGlyphs" font-weight="bold" text-anchor="end">19.9</text>
<text x="628.1" y="198.58" font-size="8.6" fill="#e6e6e6" textLength="7.6" lengthAdjust="spacingAndGlyphs">℃</text>
<path d="M641 195.18l2-3.300l2 3.300zM641 199.18l2-3.300l2 3.300z" fill="#b4aecd"/>
<rect x="646.9" y="191.68" width="18" height="7.6" fill="#7d7d7d"/>
<text x="664.7" y="199.04" font-size="9.6" fill="#3cd04c" textLength="16.6" lengthAdjust="spacingAndGlyphs" font-weight="bold" text-anchor="end">19.8</text>
<text x="665.5" y="198.58" font-size="8.6" fill="#e6e6e6" textLength="7.6" lengthAdjust="spacingAndGlyphs">℃</text>
<path d="M678.3 195.18l2-3.300l2 3.300zM678.3 199.18l2-3.300l2 3.300z" fill="#b4aecd"/>
<rect x="684.2" y="191.68" width="12.6" height="7.6" fill="#7d7d7d"/>
<text x="696.6" y="199.04" font-size="9.6" fill="#3cd04c" textLength="4.15" lengthAdjust="spacingAndGlyphs" font-weight="bold" text-anchor="end">0</text>
<text x="697.6" y="198.72" font-size="9" fill="#fff" textLength="4" lengthAdjust="spacingAndGlyphs">%</text>
<path d="M708.5 195.18l2-3.300l2 3.300zM708.5 199.18l2-3.300l2 3.300z" fill="#b4aecd"/>
<rect x="714.8" y="191.68" width="25.4" height="7.6" fill="#7d7d7d"/>
<text x="740" y="199.04" font-size="9.6" fill="#3cd04c" textLength="4.15" lengthAdjust="spacingAndGlyphs" font-weight="bold" text-anchor="end">0</text>
<text x="741" y="198.72" font-size="9" fill="#fff" textLength="16.4" lengthAdjust="spacingAndGlyphs">MJ/h</text>
<rect x="762.3" y="191.68" width="26.1" height="7.6" fill="#7d7d7d"/>
<text x="788.2" y="199.04" font-size="9.6" fill="#3cd04c" textLength="4.15" lengthAdjust="spacingAndGlyphs" font-weight="bold" text-anchor="end">0</text>
<text x="789.2" y="198.72" font-size="9" fill="#fff" textLength="8.2" lengthAdjust="spacingAndGlyphs">MJ</text>
<path d="M802 195.18l2-3.300l2 3.300zM802 199.18l2-3.300l2 3.300z" fill="#b4aecd"/>
<rect x="808" y="191.68" width="17" height="7.6" fill="#7d7d7d"/>
<text x="824.8" y="199.04" font-size="9.6" fill="#3cd04c" textLength="4.15" lengthAdjust="spacingAndGlyphs" font-weight="bold" text-anchor="end">0</text>
<text x="825.8" y="198.72" font-size="9" fill="#fff" textLength="16.8" lengthAdjust="spacingAndGlyphs">m3/h</text>
<rect x="847" y="191.68" width="27.2" height="7.6" fill="#7d7d7d"/>
<text x="874" y="199.04" font-size="9.6" fill="#3cd04c" textLength="4.15" lengthAdjust="spacingAndGlyphs" font-weight="bold" text-anchor="end">0</text>
<text x="875" y="198.72" font-size="9" fill="#fff" textLength="8.4" lengthAdjust="spacingAndGlyphs">m3</text>
<text x="557.5" y="209.88" font-size="9" fill="#fff" textLength="32.4" lengthAdjust="spacingAndGlyphs">冷水ｺｲﾙ2</text>
<path d="M603.7 206.34l2-3.300l2 3.300zM603.7 210.34l2-3.300l2 3.300z" fill="#b4aecd"/>
<rect x="609.6" y="202.84" width="17.9" height="7.6" fill="#7d7d7d"/>
<text x="627.3" y="210.2" font-size="9.6" fill="#3cd04c" textLength="16.6" lengthAdjust="spacingAndGlyphs" font-weight="bold" text-anchor="end">19.3</text>
<text x="628.1" y="209.74" font-size="8.6" fill="#e6e6e6" textLength="7.6" lengthAdjust="spacingAndGlyphs">℃</text>
<path d="M641 206.34l2-3.300l2 3.300zM641 210.34l2-3.300l2 3.300z" fill="#b4aecd"/>
<rect x="646.9" y="202.84" width="18" height="7.6" fill="#7d7d7d"/>
<text x="664.7" y="210.2" font-size="9.6" fill="#3cd04c" textLength="16.6" lengthAdjust="spacingAndGlyphs" font-weight="bold" text-anchor="end">19.8</text>
<text x="665.5" y="209.74" font-size="8.6" fill="#e6e6e6" textLength="7.6" lengthAdjust="spacingAndGlyphs">℃</text>
<path d="M678.3 206.34l2-3.300l2 3.300zM678.3 210.34l2-3.300l2 3.300z" fill="#b4aecd"/>
<rect x="684.2" y="202.84" width="12.6" height="7.6" fill="#7d7d7d"/>
<text x="696.6" y="210.2" font-size="9.6" fill="#3cd04c" textLength="4.15" lengthAdjust="spacingAndGlyphs" font-weight="bold" text-anchor="end">0</text>
<text x="697.6" y="209.88" font-size="9" fill="#fff" textLength="4" lengthAdjust="spacingAndGlyphs">%</text>
<path d="M708.5 206.34l2-3.300l2 3.300zM708.5 210.34l2-3.300l2 3.300z" fill="#b4aecd"/>
<rect x="714.8" y="202.84" width="25.4" height="7.6" fill="#7d7d7d"/>
<text x="740" y="210.2" font-size="9.6" fill="#3cd04c" textLength="4.15" lengthAdjust="spacingAndGlyphs" font-weight="bold" text-anchor="end">0</text>
<text x="741" y="209.88" font-size="9" fill="#fff" textLength="16.4" lengthAdjust="spacingAndGlyphs">MJ/h</text>
<rect x="762.3" y="202.84" width="26.1" height="7.6" fill="#7d7d7d"/>
<text x="788.2" y="210.2" font-size="9.6" fill="#3cd04c" textLength="4.15" lengthAdjust="spacingAndGlyphs" font-weight="bold" text-anchor="end">0</text>
<text x="789.2" y="209.88" font-size="9" fill="#fff" textLength="8.2" lengthAdjust="spacingAndGlyphs">MJ</text>
<path d="M802 206.34l2-3.300l2 3.300zM802 210.34l2-3.300l2 3.300z" fill="#b4aecd"/>
<rect x="808" y="202.84" width="17" height="7.6" fill="#7d7d7d"/>
<text x="824.8" y="210.2" font-size="9.6" fill="#3cd04c" textLength="4.15" lengthAdjust="spacingAndGlyphs" font-weight="bold" text-anchor="end">0</text>
<text x="825.8" y="209.88" font-size="9" fill="#fff" textLength="16.8" lengthAdjust="spacingAndGlyphs">m3/h</text>
<rect x="847" y="202.84" width="27.2" height="7.6" fill="#7d7d7d"/>
<text x="874" y="210.2" font-size="9.6" fill="#3cd04c" textLength="4.15" lengthAdjust="spacingAndGlyphs" font-weight="bold" text-anchor="end">0</text>
<text x="875" y="209.88" font-size="9" fill="#fff" textLength="8.4" lengthAdjust="spacingAndGlyphs">m3</text>
<path d="M895.7 149H987.5V230.48H895.7ZM895.7 160.64H987.5M895.7 172.28H987.5M895.7 183.92H987.5M895.7 195.56H987.5M895.7 207.2H987.5M895.7 218.84H987.5M934.8 149V230.48" fill="none" stroke="#c9c9c9" stroke-width="1"/>
<text x="898" y="158.06" font-size="9" fill="#fff" textLength="8" lengthAdjust="spacingAndGlyphs">CS</text>
<path d="M937.3 154.52l2-3.300l2 3.300zM937.3 158.52l2-3.300l2 3.300z" fill="#b4aecd"/>
<rect x="942.4" y="151.02" width="26.8" height="7.6" fill="#7d7d7d"/>
<text x="969" y="158.38" font-size="9.6" fill="#3cd04c" textLength="16.6" lengthAdjust="spacingAndGlyphs" font-weight="bold" text-anchor="end">18.3</text>
<text x="969.8" y="157.92" font-size="8.6" fill="#e6e6e6" textLength="7.6" lengthAdjust="spacingAndGlyphs">℃</text>
<text x="898" y="169.7" font-size="9" fill="#fff" textLength="8" lengthAdjust="spacingAndGlyphs">CR</text>
<path d="M937.3 166.16l2-3.300l2 3.300zM937.3 170.16l2-3.300l2 3.300z" fill="#b4aecd"/>
<rect x="942.4" y="162.66" width="26.8" height="7.6" fill="#7d7d7d"/>
<text x="969" y="170.02" font-size="9.6" fill="#3cd04c" textLength="16.6" lengthAdjust="spacingAndGlyphs" font-weight="bold" text-anchor="end">19.3</text>
<text x="969.8" y="169.56" font-size="8.6" fill="#e6e6e6" textLength="7.6" lengthAdjust="spacingAndGlyphs">℃</text>
<text x="898" y="181.34" font-size="9" fill="#fff" textLength="32" lengthAdjust="spacingAndGlyphs">瞬時熱量</text>
<path d="M937.3 177.8l2-3.300l2 3.300zM937.3 181.8l2-3.300l2 3.300z" fill="#b4aecd"/>
<rect x="942.4" y="174.3" width="26.8" height="7.6" fill="#7d7d7d"/>
<text x="969" y="181.66" font-size="9.6" fill="#3cd04c" textLength="4.15" lengthAdjust="spacingAndGlyphs" font-weight="bold" text-anchor="end">0</text>
<text x="970" y="181.34" font-size="9" fill="#fff" textLength="16.4" lengthAdjust="spacingAndGlyphs">MJ/h</text>
<text x="898" y="192.98" font-size="9" fill="#fff" textLength="32" lengthAdjust="spacingAndGlyphs">積算熱量</text>
<rect x="942.4" y="185.94" width="26.8" height="7.6" fill="#7d7d7d"/>
<text x="969" y="193.3" font-size="9.6" fill="#3cd04c" textLength="4.15" lengthAdjust="spacingAndGlyphs" font-weight="bold" text-anchor="end">0</text>
<text x="970" y="192.98" font-size="9" fill="#fff" textLength="8.2" lengthAdjust="spacingAndGlyphs">MJ</text>
<text x="898" y="204.62" font-size="9" fill="#fff" textLength="16" lengthAdjust="spacingAndGlyphs">開度</text>
<path d="M937.3 201.08l2-3.300l2 3.300zM937.3 205.08l2-3.300l2 3.300z" fill="#b4aecd"/>
<rect x="942.4" y="197.58" width="26.8" height="7.6" fill="#7d7d7d"/>
<text x="969" y="204.94" font-size="9.6" fill="#3cd04c" textLength="4.15" lengthAdjust="spacingAndGlyphs" font-weight="bold" text-anchor="end">0</text>
<text x="970" y="204.62" font-size="9" fill="#fff" textLength="4.1" lengthAdjust="spacingAndGlyphs">%</text>
<text x="898" y="216.26" font-size="9" fill="#fff" textLength="32" lengthAdjust="spacingAndGlyphs">瞬時流量</text>
<path d="M937.3 212.72l2-3.300l2 3.300zM937.3 216.72l2-3.300l2 3.300z" fill="#b4aecd"/>
<rect x="942.4" y="209.22" width="26.8" height="7.6" fill="#7d7d7d"/>
<text x="969" y="216.58" font-size="9.6" fill="#3cd04c" textLength="4.15" lengthAdjust="spacingAndGlyphs" font-weight="bold" text-anchor="end">0</text>
<text x="970" y="216.26" font-size="9" fill="#fff" textLength="16.4" lengthAdjust="spacingAndGlyphs">m3/h</text>
<text x="898" y="227.9" font-size="9" fill="#fff" textLength="32" lengthAdjust="spacingAndGlyphs">積算流量</text>
<rect x="942.4" y="220.86" width="26.8" height="7.6" fill="#7d7d7d"/>
<text x="969" y="228.22" font-size="9.6" fill="#3cd04c" textLength="4.15" lengthAdjust="spacingAndGlyphs" font-weight="bold" text-anchor="end">0</text>
<text x="970" y="227.9" font-size="9" fill="#fff" textLength="8.2" lengthAdjust="spacingAndGlyphs">m3</text>
<text x="912.8" y="131.34" font-size="9" fill="#fff" textLength="28" lengthAdjust="spacingAndGlyphs">予冷ｺｲﾙ</text>
<path d="M992.3 128.4H1111.7V230.5H992.3ZM992.3 139.7H1111.7M992.3 151.5H1111.7M992.3 163.3H1111.7M992.3 175.3H1111.7M992.3 186.6H1111.7M992.3 207.9H1111.7M1035.7 128.4V230.5" fill="none" stroke="#c9c9c9" stroke-width="1"/>
<text x="995" y="137.29" font-size="9" fill="#fff" textLength="31.2" lengthAdjust="spacingAndGlyphs">外気温度</text>
<path d="M1039.5 133.75l2-3.300l2 3.300zM1039.5 137.75l2-3.300l2 3.300z" fill="#b4aecd"/>
<rect x="1045.2" y="130.25" width="26.1" height="7.6" fill="#7d7d7d"/>
<text x="1071.1" y="137.61" font-size="9.6" fill="#3cd04c" textLength="16.6" lengthAdjust="spacingAndGlyphs" font-weight="bold" text-anchor="end">15.4</text>
<text x="1071.9" y="137.15" font-size="8.6" fill="#e6e6e6" textLength="7.6" lengthAdjust="spacingAndGlyphs">℃</text>
<text x="995" y="148.84" font-size="9" fill="#fff" textLength="31.2" lengthAdjust="spacingAndGlyphs">外気湿度</text>
<path d="M1039.5 145.3l2-3.300l2 3.300zM1039.5 149.3l2-3.300l2 3.300z" fill="#b4aecd"/>
<rect x="1045.2" y="141.8" width="26.1" height="7.6" fill="#7d7d7d"/>
<text x="1071.1" y="149.16" font-size="9.6" fill="#3cd04c" textLength="8.3" lengthAdjust="spacingAndGlyphs" font-weight="bold" text-anchor="end">65</text>
<text x="1072.1" y="148.84" font-size="9" fill="#fff" textLength="12.3" lengthAdjust="spacingAndGlyphs">%RH</text>
<text x="995" y="160.64" font-size="9" fill="#fff" textLength="31.2" lengthAdjust="spacingAndGlyphs">外気露点</text>
<path d="M1039.5 157.1l2-3.300l2 3.300zM1039.5 161.1l2-3.300l2 3.300z" fill="#b4aecd"/>
<rect x="1045.2" y="153.6" width="26.1" height="7.6" fill="#7d7d7d"/>
<text x="1071.1" y="160.96" font-size="9.6" fill="#3cd04c" textLength="12.45" lengthAdjust="spacingAndGlyphs" font-weight="bold" text-anchor="end">9.9</text>
<text x="1071.9" y="160.5" font-size="8.6" fill="#e6e6e6" textLength="7.6" lengthAdjust="spacingAndGlyphs">℃</text>
<text x="1079.2" y="160.64" font-size="9" fill="#fff" textLength="8.2" lengthAdjust="spacingAndGlyphs">DP</text>
<text x="995" y="172.54" font-size="9" fill="#fff" textLength="39" lengthAdjust="spacingAndGlyphs">外気ｴﾝﾀﾙﾋﾟ</text>
<path d="M1039.5 169l2-3.300l2 3.300zM1039.5 173l2-3.300l2 3.300z" fill="#b4aecd"/>
<rect x="1045.2" y="165.5" width="26.1" height="7.6" fill="#7d7d7d"/>
<text x="1071.1" y="172.86" font-size="9.6" fill="#3cd04c" textLength="8.3" lengthAdjust="spacingAndGlyphs" font-weight="bold" text-anchor="end">39</text>
<text x="1072.1" y="172.54" font-size="9" fill="#fff" textLength="20.5" lengthAdjust="spacingAndGlyphs">kJ/kg</text>
<text x="995" y="184.19" font-size="9" fill="#fff" textLength="27.3" lengthAdjust="spacingAndGlyphs">外気CO2</text>
<path d="M1039.5 180.65l2-3.300l2 3.300zM1039.5 184.65l2-3.300l2 3.300z" fill="#b4aecd"/>
<rect x="1045.2" y="177.15" width="26.1" height="7.6" fill="#7d7d7d"/>
<text x="1071.1" y="184.51" font-size="9.6" fill="#3cd04c" textLength="12.45" lengthAdjust="spacingAndGlyphs" font-weight="bold" text-anchor="end">479</text>
<text x="1072.1" y="184.19" font-size="9" fill="#fff" textLength="12.3" lengthAdjust="spacingAndGlyphs">ppm</text>
<text x="995" y="195.64" font-size="9" fill="#fff" textLength="31.2" lengthAdjust="spacingAndGlyphs">外気風量</text>
<path d="M1039.5 192.1l2-3.300l2 3.300zM1039.5 196.1l2-3.300l2 3.300z" fill="#b4aecd"/>
<rect x="1045.2" y="188.6" width="26.1" height="7.6" fill="#7d7d7d"/>
<text x="1071.1" y="195.96" font-size="9.6" fill="#3cd04c" textLength="16.6" lengthAdjust="spacingAndGlyphs" font-weight="bold" text-anchor="end">5745</text>
<text x="1073.5" y="195.64" font-size="9" fill="#fff" textLength="33.5" lengthAdjust="spacingAndGlyphs">×10 m3/h</text>
<rect x="1045.2" y="198" width="26.1" height="7.6" fill="#7d7d7d"/>
<text x="1071.1" y="205.36" font-size="9.6" fill="#3cd04c" textLength="24.9" lengthAdjust="spacingAndGlyphs" font-weight="bold" text-anchor="end">222289</text>
<text x="1072.1" y="205.04" font-size="9" fill="#fff" textLength="8.2" lengthAdjust="spacingAndGlyphs">m3</text>
<text x="995" y="217.44" font-size="9" fill="#fff" textLength="31.2" lengthAdjust="spacingAndGlyphs">外気冷房</text>
<text x="995" y="227.44" font-size="9" fill="#fff" textLength="31.2" lengthAdjust="spacingAndGlyphs">処理熱量</text>
<path d="M1039.5 213.9l2-3.300l2 3.300zM1039.5 217.9l2-3.300l2 3.300z" fill="#b4aecd"/>
<rect x="1045.2" y="210.4" width="26.1" height="7.6" fill="#7d7d7d"/>
<text x="1071.1" y="217.76" font-size="9.6" fill="#3cd04c" textLength="4.15" lengthAdjust="spacingAndGlyphs" font-weight="bold" text-anchor="end">0</text>
<text x="1072.1" y="217.44" font-size="9" fill="#fff" textLength="16.4" lengthAdjust="spacingAndGlyphs">MJ/h</text>
<rect x="1045.2" y="220.4" width="26.1" height="7.6" fill="#7d7d7d"/>
<text x="1071.1" y="227.76" font-size="9.6" fill="#3cd04c" textLength="4.15" lengthAdjust="spacingAndGlyphs" font-weight="bold" text-anchor="end">0</text>
<text x="1072.1" y="227.44" font-size="9" fill="#fff" textLength="8.2" lengthAdjust="spacingAndGlyphs">MJ</text>
<path d="M725.9 528H821V609.97H725.9ZM725.9 539.71H821M725.9 551.42H821M725.9 563.13H821M725.9 574.84H821M725.9 586.55H821M725.9 598.26H821M764.2 528V609.97" fill="none" stroke="#c9c9c9" stroke-width="1"/>
<text x="728" y="537.1" font-size="9" fill="#fff" textLength="8" lengthAdjust="spacingAndGlyphs">HS</text>
<path d="M767.6 533.56l2-3.300l2 3.300zM767.6 537.56l2-3.300l2 3.300z" fill="#b4aecd"/>
<rect x="772.8" y="530.06" width="26.8" height="7.6" fill="#7d7d7d"/>
<text x="799.4" y="537.41" font-size="9.6" fill="#3cd04c" textLength="16.6" lengthAdjust="spacingAndGlyphs" font-weight="bold" text-anchor="end">24.4</text>
<text x="800.2" y="536.95" font-size="8.6" fill="#e6e6e6" textLength="7.6" lengthAdjust="spacingAndGlyphs">℃</text>
<text x="728" y="548.81" font-size="9" fill="#fff" textLength="8" lengthAdjust="spacingAndGlyphs">HR</text>
<path d="M767.6 545.27l2-3.300l2 3.300zM767.6 549.27l2-3.300l2 3.300z" fill="#b4aecd"/>
<rect x="772.8" y="541.77" width="26.8" height="7.6" fill="#7d7d7d"/>
<text x="799.4" y="549.12" font-size="9.6" fill="#3cd04c" textLength="16.6" lengthAdjust="spacingAndGlyphs" font-weight="bold" text-anchor="end">20.9</text>
<text x="800.2" y="548.66" font-size="8.6" fill="#e6e6e6" textLength="7.6" lengthAdjust="spacingAndGlyphs">℃</text>
<text x="728" y="560.51" font-size="9" fill="#fff" textLength="32" lengthAdjust="spacingAndGlyphs">瞬時熱量</text>
<path d="M767.6 556.98l2-3.300l2 3.300zM767.6 560.98l2-3.300l2 3.300z" fill="#b4aecd"/>
<rect x="772.8" y="553.48" width="26.8" height="7.6" fill="#7d7d7d"/>
<text x="799.4" y="560.83" font-size="9.6" fill="#3cd04c" textLength="4.15" lengthAdjust="spacingAndGlyphs" font-weight="bold" text-anchor="end">0</text>
<text x="800.4" y="560.51" font-size="9" fill="#fff" textLength="16.4" lengthAdjust="spacingAndGlyphs">MJ/h</text>
<text x="728" y="572.23" font-size="9" fill="#fff" textLength="32" lengthAdjust="spacingAndGlyphs">積算熱量</text>
<rect x="772.8" y="565.19" width="26.8" height="7.6" fill="#7d7d7d"/>
<text x="799.4" y="572.54" font-size="9.6" fill="#3cd04c" textLength="4.15" lengthAdjust="spacingAndGlyphs" font-weight="bold" text-anchor="end">0</text>
<text x="800.4" y="572.23" font-size="9" fill="#fff" textLength="8.2" lengthAdjust="spacingAndGlyphs">MJ</text>
<text x="728" y="583.93" font-size="9" fill="#fff" textLength="16" lengthAdjust="spacingAndGlyphs">開度</text>
<path d="M767.6 580.39l2-3.300l2 3.300zM767.6 584.39l2-3.300l2 3.300z" fill="#b4aecd"/>
<rect x="772.8" y="576.89" width="26.8" height="7.6" fill="#7d7d7d"/>
<text x="799.4" y="584.25" font-size="9.6" fill="#3cd04c" textLength="4.15" lengthAdjust="spacingAndGlyphs" font-weight="bold" text-anchor="end">0</text>
<text x="800.4" y="583.93" font-size="9" fill="#fff" textLength="4.1" lengthAdjust="spacingAndGlyphs">%</text>
<text x="728" y="595.64" font-size="9" fill="#fff" textLength="32" lengthAdjust="spacingAndGlyphs">瞬時流量</text>
<path d="M767.6 592.11l2-3.300l2 3.300zM767.6 596.11l2-3.300l2 3.300z" fill="#b4aecd"/>
<rect x="772.8" y="588.61" width="26.8" height="7.6" fill="#7d7d7d"/>
<text x="799.4" y="595.96" font-size="9.6" fill="#3cd04c" textLength="4.15" lengthAdjust="spacingAndGlyphs" font-weight="bold" text-anchor="end">0</text>
<text x="800.4" y="595.64" font-size="9" fill="#fff" textLength="16.4" lengthAdjust="spacingAndGlyphs">m3/h</text>
<text x="728" y="607.36" font-size="9" fill="#fff" textLength="32" lengthAdjust="spacingAndGlyphs">積算流量</text>
<rect x="772.8" y="600.32" width="26.8" height="7.6" fill="#7d7d7d"/>
<text x="799.4" y="607.67" font-size="9.6" fill="#3cd04c" textLength="4.15" lengthAdjust="spacingAndGlyphs" font-weight="bold" text-anchor="end">0</text>
<text x="800.4" y="607.36" font-size="9" fill="#fff" textLength="8.2" lengthAdjust="spacingAndGlyphs">m3</text>
<text x="683.6" y="548.74" font-size="9" fill="#fff" textLength="27.3" lengthAdjust="spacingAndGlyphs">再生ｺｲﾙ</text>
<text x="775.4" y="109.77" font-size="8.8" fill="#fff" textLength="15.6" lengthAdjust="spacingAndGlyphs">外気</text>
<rect x="793.7" y="103" width="19.3" height="7.2" fill="#7d7d7d"/>
<text x="812.8" y="110.16" font-size="9.6" fill="#3cd04c" textLength="16.6" lengthAdjust="spacingAndGlyphs" font-weight="bold" text-anchor="end">15.4</text>
<text x="813.6" y="109.7" font-size="8.6" fill="#e6e6e6" textLength="7.6" lengthAdjust="spacingAndGlyphs">℃</text>
<rect x="826" y="103" width="12.7" height="7.2" fill="#7d7d7d"/>
<text x="838.5" y="110.16" font-size="9.6" fill="#3cd04c" textLength="8.3" lengthAdjust="spacingAndGlyphs" font-weight="bold" text-anchor="end">65</text>
<text x="839.5" y="109.84" font-size="9" fill="#fff" textLength="12.9" lengthAdjust="spacingAndGlyphs">%RH</text>
<text x="856.6" y="109.77" font-size="8.8" fill="#fff" textLength="11.7" lengthAdjust="spacingAndGlyphs">CO2</text>
<rect x="871.8" y="103" width="17.7" height="7.2" fill="#7d7d7d"/>
<text x="889.3" y="110.16" font-size="9.6" fill="#3cd04c" textLength="12.45" lengthAdjust="spacingAndGlyphs" font-weight="bold" text-anchor="end">479</text>
<text x="890.3" y="109.84" font-size="9" fill="#fff" textLength="11.4" lengthAdjust="spacingAndGlyphs">ppm</text>
<text x="907.8" y="109.77" font-size="8.8" fill="#fff" textLength="22.8" lengthAdjust="spacingAndGlyphs">日射量</text>
<rect x="934.5" y="103" width="18.3" height="7.2" fill="#7d7d7d"/>
<text x="953.6" y="109.84" font-size="9" fill="#fff" textLength="17.2" lengthAdjust="spacingAndGlyphs">W/m2</text>
<rect x="950.200" y="103" width="2.600" height="7.200" fill="#c050d0"/>
<text x="972.5" y="109.77" font-size="8.8" fill="#fff" textLength="23.4" lengthAdjust="spacingAndGlyphs">降雨量</text>
<rect x="1001" y="103" width="14.5" height="7.2" fill="#7d7d7d"/>
<text x="1015.3" y="110.16" font-size="9.6" fill="#3cd04c" textLength="4.15" lengthAdjust="spacingAndGlyphs" font-weight="bold" text-anchor="end">0</text>
<text x="1016.3" y="109.84" font-size="9" fill="#fff" textLength="16.8" lengthAdjust="spacingAndGlyphs">mm/h</text>
<path d="M1034 106.6a4.500 4.500 0 0 1 9 0zM1038.500 106.6v3.500" fill="#456585" stroke="#456585" stroke-width=".8"/>
<text x="1044.5" y="109.77" font-size="8.8" fill="#fff" textLength="16.8" lengthAdjust="spacingAndGlyphs">風速</text>
<rect x="1064.7" y="103" width="13.3" height="7.2" fill="#7d7d7d"/>
<text x="1077.8" y="110.16" font-size="9.6" fill="#3cd04c" textLength="4.15" lengthAdjust="spacingAndGlyphs" font-weight="bold" text-anchor="end">0</text>
<text x="1078.8" y="109.84" font-size="9" fill="#fff" textLength="12.6" lengthAdjust="spacingAndGlyphs">m/s</text>
<circle cx="1103" cy="113.500" r="7.300" fill="#17178f"/><circle cx="1103" cy="113.500" r="7" fill="none" stroke="#3a3ac4" stroke-width=".900"/>
<path d="M1108 108.500L1098 118.500" stroke="#5a5ad0" stroke-width=".600"/>
<path d="M1108.800 119.600L1102.300 117.200L1103.800 115.700L1098 109.900L1099.300 107.600L1101 108.700L1099.800 110L1105.400 114.100L1106.700 112.800Z" fill="#fff"/>
<text x="1101.4" y="104.86" font-size="4.6" fill="#fff" textLength="3.2" lengthAdjust="spacingAndGlyphs" font-style="italic">N</text>
<text x="1101.7" y="125.86" font-size="4.6" fill="#fff" textLength="2.8" lengthAdjust="spacingAndGlyphs" font-style="italic">S</text>
<text x="1091.2" y="115.46" font-size="4.6" fill="#fff" textLength="3.5" lengthAdjust="spacingAndGlyphs">W</text>
<text x="1111.3" y="115.46" font-size="4.6" fill="#fff" textLength="2.6" lengthAdjust="spacingAndGlyphs">E</text>
<path d="M190.3 504.6H431.5V610H190.3ZM190.3 516.8H431.5M190.3 528.6H334.7M190.3 540.4H431.5M190.3 551.5H431.5M334.7 563.5H431.5M190.3 574.6H431.5M276.4 516.8V610M334.7 516.8V574.6M385.7 516.8V574.6" fill="none" stroke="#c9c9c9" stroke-width="1"/>
<text x="192" y="513.94" font-size="9" fill="#fff" textLength="32.2" lengthAdjust="spacingAndGlyphs">制御許可</text>
<text x="192" y="525.94" font-size="9" fill="#fff" textLength="64.4" lengthAdjust="spacingAndGlyphs">給気温度設定変更</text>
<rect x="279" y="519.7" width="7" height="6" fill="#12b012"/><rect x="280.2" y="520.7" width="4.600" height="3.500" fill="#5dff5d"/>
<text x="290.4" y="525.94" font-size="9" fill="#18d818" textLength="16.1" lengthAdjust="spacingAndGlyphs">禁止</text>
<text x="192" y="537.74" font-size="9" fill="#fff" textLength="80.5" lengthAdjust="spacingAndGlyphs">給気露点温度設定変更</text>
<rect x="279" y="531.5" width="7" height="6" fill="#12b012"/><rect x="280.2" y="532.5" width="4.600" height="3.500" fill="#5dff5d"/>
<text x="290.4" y="537.74" font-size="9" fill="#18d818" textLength="16.1" lengthAdjust="spacingAndGlyphs">禁止</text>
<text x="192" y="549.24" font-size="9" fill="#fff" textLength="32.2" lengthAdjust="spacingAndGlyphs">加湿制御</text>
<rect x="279" y="543" width="7" height="6" fill="#d02010"/><rect x="280.2" y="544" width="4.600" height="3.500" fill="#ff6a50"/>
<text x="290.4" y="549.24" font-size="9" fill="#ff2a1a" textLength="16.1" lengthAdjust="spacingAndGlyphs">許可</text>
<text x="192" y="560.84" font-size="9" fill="#fff" textLength="48.3" lengthAdjust="spacingAndGlyphs">外気冷房制御</text>
<rect x="279" y="554.6" width="7" height="6" fill="#12b012"/><rect x="280.2" y="555.6" width="4.600" height="3.500" fill="#5dff5d"/>
<text x="290.4" y="560.84" font-size="9" fill="#18d818" textLength="16.1" lengthAdjust="spacingAndGlyphs">禁止</text>
<text x="279" y="572.54" font-size="9" fill="#4a4a4a" textLength="40.25" lengthAdjust="spacingAndGlyphs">外気冷房中</text>
<text x="192" y="584.94" font-size="9" fill="#fff" textLength="44.28" lengthAdjust="spacingAndGlyphs">ｳｫｰﾐﾝｸﾞｱｯﾌﾟ</text>
<rect x="279" y="578.7" width="7" height="6" fill="#12b012"/><rect x="280.2" y="579.7" width="4.600" height="3.500" fill="#5dff5d"/>
<text x="290.4" y="584.94" font-size="9" fill="#18d818" textLength="16.1" lengthAdjust="spacingAndGlyphs">禁止</text>
<text x="278" y="595.64" font-size="9" fill="#4a4a4a" textLength="52.33" lengthAdjust="spacingAndGlyphs">ｳｫｰﾐﾝｸﾞｱｯﾌﾟ中</text>
<text x="277.5" y="606.84" font-size="9" fill="#fff" textLength="14.8" lengthAdjust="spacingAndGlyphs">時間</text>
<rect x="293" y="599.8" width="16.8" height="7.6" fill="#7d7d7d"/>
<text x="309.6" y="607.16" font-size="9.6" fill="#5ad6da" textLength="16.6" lengthAdjust="spacingAndGlyphs" font-weight="bold" text-anchor="end">9999</text>
<text x="310.6" y="606.84" font-size="9" fill="#fff" textLength="12.3" lengthAdjust="spacingAndGlyphs">min</text>
<text x="336.4" y="525.94" font-size="9" fill="#fff" textLength="32.2" lengthAdjust="spacingAndGlyphs">ﾅｲﾄﾊﾟｰｼﾞ</text>
<rect x="389" y="519.7" width="7" height="6" fill="#12b012"/><rect x="390.2" y="520.7" width="4.600" height="3.500" fill="#5dff5d"/>
<text x="399.6" y="525.94" font-size="9" fill="#18d818" textLength="16.1" lengthAdjust="spacingAndGlyphs">禁止</text>
<text x="399.6" y="537.64" font-size="9" fill="#4a4a4a" textLength="16.1" lengthAdjust="spacingAndGlyphs">無効</text>
<text x="336.4" y="549.24" font-size="9" fill="#fff" textLength="48.3" lengthAdjust="spacingAndGlyphs">連結運転ﾓｰﾄﾞ</text>
<rect x="389" y="543" width="7" height="6" fill="#12b012"/><rect x="390.2" y="544" width="4.600" height="3.500" fill="#5dff5d"/>
<text x="399.6" y="549.24" font-size="9" fill="#18d818" textLength="12" lengthAdjust="spacingAndGlyphs">OFF</text>
<text x="336.4" y="560.84" font-size="9" fill="#fff" textLength="44.28" lengthAdjust="spacingAndGlyphs">還気CO2制御</text>
<rect x="389" y="554.6" width="7" height="6" fill="#d02010"/><rect x="390.2" y="555.6" width="4.600" height="3.500" fill="#ff6a50"/>
<text x="399.6" y="560.84" font-size="9" fill="#ff2a1a" textLength="16.1" lengthAdjust="spacingAndGlyphs">許可</text>
<text x="336.4" y="572.44" font-size="9" fill="#fff" textLength="48.3" lengthAdjust="spacingAndGlyphs">台数制御ﾓｰﾄﾞ</text>
<rect x="389" y="566.2" width="7" height="6" fill="#d02010"/><rect x="390.2" y="567.2" width="4.600" height="3.500" fill="#ff6a50"/>
<text x="399.6" y="572.44" font-size="9" fill="#ff2a1a" textLength="16.1" lengthAdjust="spacingAndGlyphs">許可</text>
<text x="336.4" y="595.64" font-size="9" fill="#fff" textLength="24.15" lengthAdjust="spacingAndGlyphs">給気SP</text>
<rect x="362" y="588.6" width="22.6" height="7.6" fill="#7d7d7d"/>
<text x="384.4" y="595.96" font-size="9.6" fill="#5ad6da" textLength="16.6" lengthAdjust="spacingAndGlyphs" font-weight="bold" text-anchor="end">35.0</text>
<text x="385.2" y="595.5" font-size="8.6" fill="#e6e6e6" textLength="7.6" lengthAdjust="spacingAndGlyphs">℃</text>
<text x="336.4" y="606.84" font-size="9" fill="#fff" textLength="24.15" lengthAdjust="spacingAndGlyphs">還気SP</text>
<rect x="362" y="599.8" width="22.6" height="7.6" fill="#7d7d7d"/>
<text x="384.4" y="607.16" font-size="9.6" fill="#5ad6da" textLength="16.6" lengthAdjust="spacingAndGlyphs" font-weight="bold" text-anchor="end">24.0</text>
<text x="385.2" y="606.7" font-size="8.6" fill="#e6e6e6" textLength="7.6" lengthAdjust="spacingAndGlyphs">℃</text>
<path d="M435.400 528.6H601.700V609.6H435.400ZM435.400 539.7H601.700M467.100 539.7V609.6M583.900 539.7V609.6M467.100 551.5H601.700M467.100 562.9H601.700M467.100 574.6H601.700M467.100 586.4H601.700M467.100 598.2H601.700" fill="none" stroke="#c9c9c9" stroke-width="1"/>
<text x="437.5" y="537.44" font-size="9" fill="#fff" textLength="32.2" lengthAdjust="spacingAndGlyphs">運転ﾓｰﾄﾞ</text>
<text x="437.5" y="578.24" font-size="9" fill="#fff" textLength="32.2" lengthAdjust="spacingAndGlyphs">省ｴﾈﾙｷﾞｰ</text>
<text x="468.9" y="548.84" font-size="9" fill="#fff" textLength="48.3" lengthAdjust="spacingAndGlyphs">輻射優先制御</text>
<text x="586" y="548.84" font-size="9" fill="#18d818" textLength="12" lengthAdjust="spacingAndGlyphs">OFF</text>
<text x="468.9" y="560.44" font-size="9" fill="#fff" textLength="64.4" lengthAdjust="spacingAndGlyphs">外気冷房優先制御</text>
<text x="586" y="560.44" font-size="9" fill="#18d818" textLength="12" lengthAdjust="spacingAndGlyphs">OFF</text>
<text x="468.9" y="571.99" font-size="9" fill="#fff" textLength="88.55" lengthAdjust="spacingAndGlyphs">床吹出優先制御(ﾃﾞｼｶﾝﾄ)</text>
<text x="586" y="571.99" font-size="9" fill="#18d818" textLength="12" lengthAdjust="spacingAndGlyphs">OFF</text>
<text x="468.9" y="583.74" font-size="9" fill="#fff" textLength="112.7" lengthAdjust="spacingAndGlyphs">床吹出優先制御(外気冷房優先)</text>
<text x="586" y="583.74" font-size="9" fill="#18d818" textLength="12" lengthAdjust="spacingAndGlyphs">OFF</text>
<text x="468.9" y="595.54" font-size="9" fill="#fff" textLength="48.3" lengthAdjust="spacingAndGlyphs">ﾅｲﾄﾊﾟｰｼﾞ制御</text>
<text x="586" y="595.54" font-size="9" fill="#18d818" textLength="12" lengthAdjust="spacingAndGlyphs">OFF</text>
<text x="468.9" y="607.14" font-size="9" fill="#fff" textLength="48.3" lengthAdjust="spacingAndGlyphs">最適起動制御</text>
<text x="586" y="607.14" font-size="9" fill="#18d818" textLength="12" lengthAdjust="spacingAndGlyphs">OFF</text>
<text x="438.9" y="516.17" font-size="8.8" fill="#3c3c3c" textLength="32" lengthAdjust="spacingAndGlyphs">排熱運転</text>
</svg>
</div>
</body></html>
